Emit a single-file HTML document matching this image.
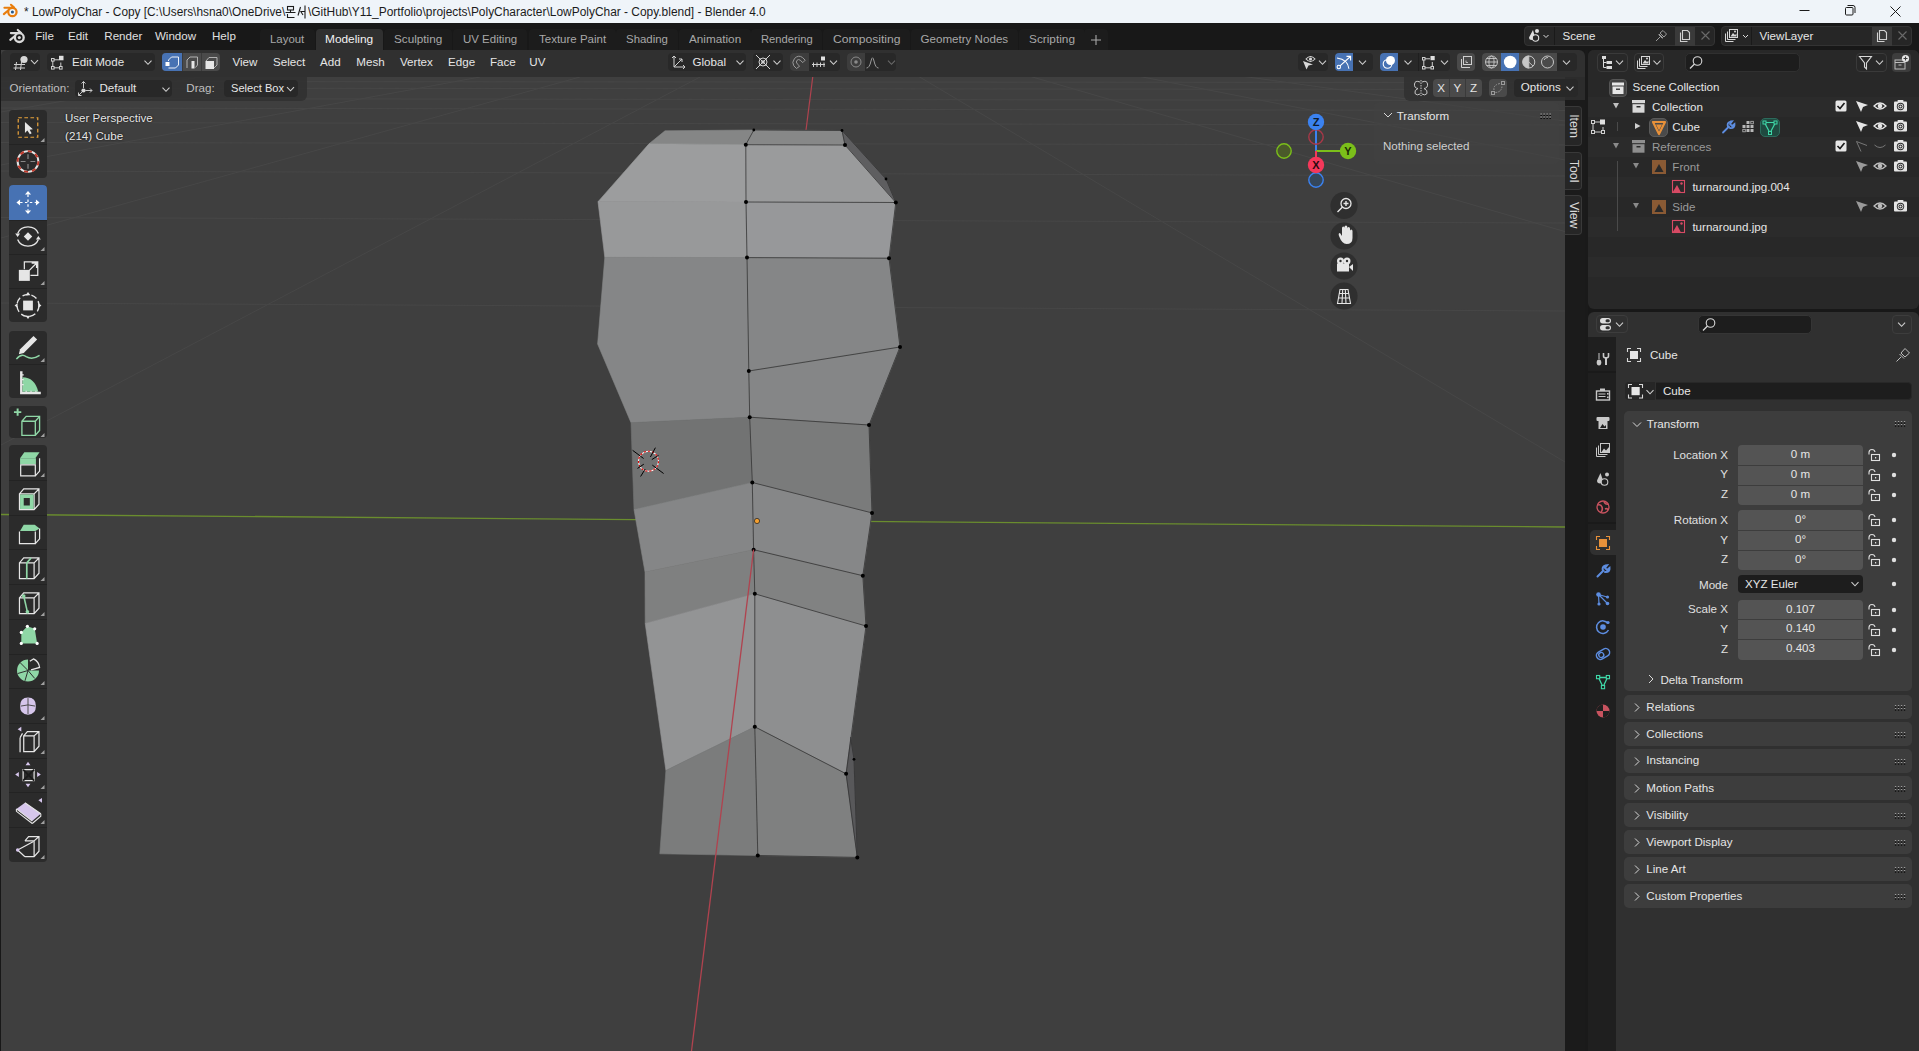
<!DOCTYPE html>
<html><head><meta charset="utf-8">
<style>
*{box-sizing:border-box}
html,body{margin:0;padding:0}
body{width:1919px;height:1051px;overflow:hidden;position:relative;background:#181818;font-family:"Liberation Sans",sans-serif;font-size:12px;color:#e6e6e6}
.a{position:absolute}
.t{position:absolute;white-space:nowrap;line-height:1}
svg{position:absolute;overflow:visible}
</style></head><body>
<div class="a" style="left:0px;top:0px;width:1919px;height:23px;background:#eff4f9;"></div>
<svg style="left:0px;top:0px;" width="24" height="23" viewBox="0 0 24 23"><g transform="translate(12.4,12.0) scale(0.95)"><path d="M-8.4 -4.5 L-0.5 -4.5 M-1.5 -7.6 L1.8 -4.6 M-9 2.2 L-3.2 -2.6" stroke="#e87d0d" stroke-width="2.2" stroke-linecap="round" fill="none"/><circle r="4.4" fill="#eef3f8" stroke="#e87d0d" stroke-width="2.3"/><circle r="1.6" fill="#265787"/></g></svg>
<div class="t" style="left:23.75px;top:6.14px;font-size:12px;color:#1b1b1b;transform:scaleX(0.9867);transform-origin:0 0;">* LowPolyChar - Copy [C:\Users\hsna0\OneDrive\</div>
<svg style="left:285px;top:5px;" width="23" height="14" viewBox="0 0 23 14"><g fill="none" stroke="#1b1b1b" stroke-width="1.1">
<rect x="2.5" y="1.5" width="6" height="3.5"/><path d="M0.5 7.5 H10.5 M5.5 5 V7.5 M2.5 9 V12.5 H9.5"/>
<path d="M15.5 2 L13 10.5 M15.5 6 L18 10 M16 6.5 H19.5 M20 0.5 V13.5"/></g></svg>
<div class="t" style="left:308.00px;top:6.14px;font-size:12px;color:#1b1b1b;transform:scaleX(0.9941);transform-origin:0 0;">\GitHub\Y11_Portfolio\projects\PolyCharacter\LowPolyChar - Copy.blend] - Blender 4.0</div>
<svg style="left:1795px;top:2px;" width="120" height="18" viewBox="0 0 120 18"><g stroke="#1b1b1b" stroke-width="1" fill="none">
<path d="M4.5 8.5 H14.5"/>
<rect x="50.5" y="5.5" width="7.5" height="7.5" rx="1"/><path d="M52.5 3.5 H58 Q60 3.5 60 5.5 V11"/>
<path d="M95.5 4.5 L105.5 14.5 M105.5 4.5 L95.5 14.5"/></g></svg>
<div class="a" style="left:0px;top:23px;width:1919px;height:27px;background:#181818;"></div>
<svg style="left:0px;top:23px;" width="30" height="27" viewBox="0 0 30 27"><g transform="translate(19.3,14.6) scale(1.0)"><path d="M-8.4 -4.5 L-0.5 -4.5 M-1.5 -7.6 L1.8 -4.6 M-9 2.2 L-3.2 -2.6" stroke="#dadada" stroke-width="2.2" stroke-linecap="round" fill="none"/><circle r="4.4" fill="#181818" stroke="#dadada" stroke-width="2.3"/><circle r="1.6" fill="#dadada"/></g></svg>
<div class="t" style="left:35.20px;top:30.48px;font-size:11.6px;color:#e0e0e0;">File</div>
<div class="t" style="left:68.10px;top:30.48px;font-size:11.6px;color:#e0e0e0;">Edit</div>
<div class="t" style="left:104.30px;top:30.48px;font-size:11.6px;color:#e0e0e0;">Render</div>
<div class="t" style="left:154.90px;top:30.48px;font-size:11.6px;color:#e0e0e0;">Window</div>
<div class="t" style="left:212.00px;top:30.48px;font-size:11.6px;color:#e0e0e0;">Help</div>
<div class="a" style="left:260.3px;top:29px;width:54.30000000000001px;height:21px;background:#1c1c1c;border-radius:4px;border-bottom-left-radius:0;border-bottom-right-radius:0;"></div>
<div class="t" style="left:270.30px;top:33.18px;font-size:11.6px;color:#a8a8a8;transform:scaleX(0.9848);transform-origin:0 0;">Layout</div>
<div class="a" style="left:316px;top:29px;width:67px;height:21px;background:#303030;border-radius:4px;border-bottom-left-radius:0;border-bottom-right-radius:0;"></div>
<div class="t" style="left:325.30px;top:33.18px;font-size:11.6px;color:#f2f2f2;transform:scaleX(1.0239);transform-origin:0 0;">Modeling</div>
<div class="a" style="left:384.1px;top:29px;width:68.29999999999995px;height:21px;background:#1c1c1c;border-radius:4px;border-bottom-left-radius:0;border-bottom-right-radius:0;"></div>
<div class="t" style="left:394.10px;top:33.18px;font-size:11.6px;color:#a8a8a8;transform:scaleX(1.0121);transform-origin:0 0;">Sculpting</div>
<div class="a" style="left:453.2px;top:29px;width:74.19999999999999px;height:21px;background:#1c1c1c;border-radius:4px;border-bottom-left-radius:0;border-bottom-right-radius:0;"></div>
<div class="t" style="left:463.20px;top:33.18px;font-size:11.6px;color:#a8a8a8;transform:scaleX(0.9889);transform-origin:0 0;">UV Editing</div>
<div class="a" style="left:528.6px;top:29px;width:87.19999999999993px;height:21px;background:#1c1c1c;border-radius:4px;border-bottom-left-radius:0;border-bottom-right-radius:0;"></div>
<div class="t" style="left:538.60px;top:33.18px;font-size:11.6px;color:#a8a8a8;transform:scaleX(0.9925);transform-origin:0 0;">Texture Paint</div>
<div class="a" style="left:616px;top:29px;width:62px;height:21px;background:#1c1c1c;border-radius:4px;border-bottom-left-radius:0;border-bottom-right-radius:0;"></div>
<div class="t" style="left:626.00px;top:33.18px;font-size:11.6px;color:#a8a8a8;transform:scaleX(0.9866);transform-origin:0 0;">Shading</div>
<div class="a" style="left:678.8px;top:29px;width:72.20000000000005px;height:21px;background:#1c1c1c;border-radius:4px;border-bottom-left-radius:0;border-bottom-right-radius:0;"></div>
<div class="t" style="left:688.80px;top:33.18px;font-size:11.6px;color:#a8a8a8;transform:scaleX(1.0120);transform-origin:0 0;">Animation</div>
<div class="a" style="left:750.8px;top:29px;width:71.70000000000005px;height:21px;background:#1c1c1c;border-radius:4px;border-bottom-left-radius:0;border-bottom-right-radius:0;"></div>
<div class="t" style="left:760.80px;top:33.18px;font-size:11.6px;color:#a8a8a8;transform:scaleX(0.9659);transform-origin:0 0;">Rendering</div>
<div class="a" style="left:822.5px;top:29px;width:87.5px;height:21px;background:#1c1c1c;border-radius:4px;border-bottom-left-radius:0;border-bottom-right-radius:0;"></div>
<div class="t" style="left:832.50px;top:33.18px;font-size:11.6px;color:#a8a8a8;transform:scaleX(1.0469);transform-origin:0 0;">Compositing</div>
<div class="a" style="left:910.5px;top:29px;width:107.5px;height:21px;background:#1c1c1c;border-radius:4px;border-bottom-left-radius:0;border-bottom-right-radius:0;"></div>
<div class="t" style="left:920.50px;top:33.18px;font-size:11.6px;color:#a8a8a8;">Geometry Nodes</div>
<div class="a" style="left:1019px;top:29px;width:66px;height:21px;background:#1c1c1c;border-radius:4px;border-bottom-left-radius:0;border-bottom-right-radius:0;"></div>
<div class="t" style="left:1029.00px;top:33.18px;font-size:11.6px;color:#a8a8a8;transform:scaleX(1.0192);transform-origin:0 0;">Scripting</div>
<div class="a" style="left:1084px;top:29px;width:24px;height:21px;background:#1c1c1c;border-radius:4px;border-bottom-left-radius:0;border-bottom-right-radius:0;"></div>
<svg style="left:1090px;top:34px;" width="12" height="12" viewBox="0 0 12 12"><path d="M6 1 V11 M1 6 H11" stroke="#a8a8a8" stroke-width="1.1"/></svg>
<div class="a" style="left:1524px;top:26px;width:191px;height:20px;background:#262626;border-radius:4px;border:1px solid #333;"></div>
<div class="a" style="left:1674.5px;top:26.5px;width:20px;height:19px;background:#3a3a3a;"></div>
<div class="a" style="left:1554px;top:27px;width:1px;height:18px;background:#1a1a1a;"></div>
<svg style="left:1527px;top:27px;" width="28" height="18" viewBox="0 0 28 18"><path d="M6 3 L2 10.5 Q2 13 5 13 Q8 13 8 10.5 Z" fill="#dedede"/><circle cx="10" cy="4" r="2" fill="#dedede"/>
<circle cx="8.5" cy="11" r="3.2" fill="#282828" stroke="#dedede" stroke-width="1.1"/>
<path d="M16.5 8 L19 10.5 L21.5 8" fill="none" stroke="#dedede" stroke-width="1"/></svg>
<div class="t" style="left:1562.50px;top:30.18px;font-size:11.6px;color:#e6e6e6;">Scene</div>
<svg style="left:1654px;top:29px;" width="14" height="14" viewBox="0 0 14 14"><path d="M2 12 L6 8 M5 5 L9 9 M6 4 L9 1.5 L12.5 5 L10 8 Z M4.5 5.5 L8.5 9.5" fill="none" stroke="#9a9a9a" stroke-width="1"/></svg>
<svg style="left:1677px;top:28px;" width="15" height="16" viewBox="0 0 15 16"><path d="M3.5 4.5 V13.5 H10.5 M5.5 2.5 H10.5 L12.5 4.5 V11.5 H5.5 Z" fill="none" stroke="#d0d0d0" stroke-width="1.1"/></svg>
<svg style="left:1700px;top:30px;" width="11" height="11" viewBox="0 0 11 11"><path d="M1.5 1.5 L9.5 9.5 M9.5 1.5 L1.5 9.5" stroke="#6a6a6a" stroke-width="1.1"/></svg>
<div class="a" style="left:1721px;top:26px;width:191px;height:20px;background:#262626;border-radius:4px;border:1px solid #333;"></div>
<div class="a" style="left:1872px;top:26.5px;width:20px;height:19px;background:#3a3a3a;"></div>
<div class="a" style="left:1751px;top:27px;width:1px;height:18px;background:#1a1a1a;"></div>
<svg style="left:1724px;top:27px;" width="28" height="18" viewBox="0 0 28 18"><g fill="none" stroke="#d6d6d6" stroke-width="1"><rect x="5.5" y="2.5" width="8" height="8"/><path d="M3.5 4.5 V12.5 H11.5 M1.5 6.5 V14.5 H9.5"/></g>
<path d="M6.5 9.5 L9 6 L11 8 L12.5 6.5 V9.5 Z" fill="#d6d6d6"/><circle cx="11" cy="4.5" r="1" fill="#d6d6d6"/>
<path d="M19 8 L21.5 10.5 L24 8" fill="none" stroke="#dedede" stroke-width="1"/></svg>
<div class="t" style="left:1759.50px;top:30.18px;font-size:11.6px;color:#e6e6e6;">ViewLayer</div>
<svg style="left:1874px;top:28px;" width="15" height="16" viewBox="0 0 15 16"><path d="M3.5 4.5 V13.5 H10.5 M5.5 2.5 H10.5 L12.5 4.5 V11.5 H5.5 Z" fill="none" stroke="#d0d0d0" stroke-width="1.1"/></svg>
<svg style="left:1897px;top:30px;" width="11" height="11" viewBox="0 0 11 11"><path d="M1.5 1.5 L9.5 9.5 M9.5 1.5 L1.5 9.5" stroke="#6a6a6a" stroke-width="1.1"/></svg>
<div class="a" style="left:1px;top:50px;width:1564px;height:1001px;background:#3f3f3f;"></div>
<svg style="left:0;top:0" width="1919" height="1051" viewBox="0 0 1919 1051">
<line x1="1" y1="81.5" x2="1565" y2="82.5" stroke="#474747" stroke-width="1"/>
<line x1="1" y1="88" x2="1565" y2="89.5" stroke="#474747" stroke-width="1"/>
<line x1="1" y1="98.5" x2="1565" y2="100.5" stroke="#474747" stroke-width="1"/>
<line x1="1" y1="108" x2="1565" y2="110.5" stroke="#474747" stroke-width="1"/>
<line x1="1" y1="122.5" x2="1565" y2="125" stroke="#474747" stroke-width="1"/>
<line x1="1" y1="142.5" x2="1565" y2="145" stroke="#474747" stroke-width="1"/>
<line x1="1" y1="171" x2="1565" y2="176" stroke="#474747" stroke-width="1"/>
<line x1="1" y1="217.5" x2="1565" y2="223" stroke="#474747" stroke-width="1"/>
<line x1="1" y1="303" x2="1565" y2="311" stroke="#474747" stroke-width="1"/>
<line x1="1" y1="445" x2="700" y2="77" stroke="#474747" stroke-width="1"/>
<line x1="1" y1="238" x2="580" y2="77" stroke="#474747" stroke-width="1"/>
<line x1="1" y1="165" x2="480" y2="77" stroke="#474747" stroke-width="1"/>
<line x1="1" y1="112" x2="200" y2="77" stroke="#474747" stroke-width="1"/>
<line x1="919" y1="76.6" x2="1565" y2="462" stroke="#474747" stroke-width="1"/>
<line x1="1031" y1="76.6" x2="1565" y2="231.6" stroke="#474747" stroke-width="1"/>
<line x1="1140.5" y1="76.6" x2="1565" y2="160" stroke="#474747" stroke-width="1"/>
<line x1="1245" y1="76.6" x2="1565" y2="121" stroke="#474747" stroke-width="1"/>
<line x1="1" y1="514.5" x2="1565" y2="527" stroke="#6a8d2e" stroke-width="1.3"/>
<line x1="806" y1="130" x2="813" y2="75" stroke="#b0434f" stroke-width="1.2"/>
<polygon points="665.0,130.8 753.8,130.0 745.8,144.7 649.0,143.8" fill="#858686" stroke="#858686" stroke-width="0.6"/>
<polygon points="649.0,143.8 745.8,144.7 746.0,202.0 598.0,201.7" fill="#9c9d9e" stroke="#9c9d9e" stroke-width="0.6"/>
<polygon points="598.0,201.7 746.0,202.0 747.0,257.6 604.8,257.3" fill="#98999a" stroke="#98999a" stroke-width="0.6"/>
<polygon points="604.8,257.3 747.0,257.6 748.8,371.0 749.7,417.2 631.0,422.7 597.6,344.0" fill="#858687" stroke="#858687" stroke-width="0.6"/>
<polygon points="631.0,422.7 749.7,417.2 752.3,482.5 634.0,509.6" fill="#727373" stroke="#727373" stroke-width="0.6"/>
<polygon points="634.0,509.6 752.3,482.5 753.6,549.7 645.0,572.0" fill="#858687" stroke="#858687" stroke-width="0.6"/>
<polygon points="645.0,572.0 753.6,549.7 754.8,593.8 645.2,623.5" fill="#7f8080" stroke="#7f8080" stroke-width="0.6"/>
<polygon points="645.2,623.5 754.8,593.8 754.8,726.8 665.9,770.4" fill="#939495" stroke="#939495" stroke-width="0.6"/>
<polygon points="665.9,770.4 754.8,726.8 757.8,855.5 659.8,853.8" fill="#7b7c7c" stroke="#7b7c7c" stroke-width="0.6"/>
<polygon points="753.8,130.0 842.0,130.5 845.0,145.0 745.8,144.7" fill="#878888" stroke="#878888" stroke-width="0.6"/>
<polygon points="842.0,130.5 886.0,179.0 895.8,202.5 845.0,145.0" fill="#5e5e60" stroke="#5e5e60" stroke-width="0.6"/>
<polygon points="745.8,144.7 845.0,145.0 895.8,202.5 746.0,202.0" fill="#9a9b9c" stroke="#9a9b9c" stroke-width="0.6"/>
<polygon points="746.0,202.0 895.8,202.5 889.0,258.2 747.0,257.6" fill="#97989a" stroke="#97989a" stroke-width="0.6"/>
<polygon points="747.0,257.6 889.0,258.2 900.0,347.0 748.8,371.0" fill="#858687" stroke="#858687" stroke-width="0.6"/>
<polygon points="748.8,371.0 900.0,347.0 869.0,425.0 749.7,417.2" fill="#858687" stroke="#858687" stroke-width="0.6"/>
<polygon points="749.7,417.2 869.0,425.0 872.0,512.9 752.3,482.5" fill="#7a7b7b" stroke="#7a7b7b" stroke-width="0.6"/>
<polygon points="752.3,482.5 872.0,512.9 862.8,575.7 753.6,549.7" fill="#868788" stroke="#868788" stroke-width="0.6"/>
<polygon points="753.6,549.7 862.8,575.7 866.0,626.0 754.8,593.8" fill="#818282" stroke="#818282" stroke-width="0.6"/>
<polygon points="754.8,593.8 866.0,626.0 846.1,773.8 754.8,726.8" fill="#8e8f90" stroke="#8e8f90" stroke-width="0.6"/>
<polygon points="754.8,726.8 846.1,773.8 857.3,857.4 757.8,855.5" fill="#7f8080" stroke="#7f8080" stroke-width="0.6"/>
<polygon points="850.7,738.6 854.0,759.3 857.3,857.4 846.1,773.8" fill="#58585a" stroke="#58585a" stroke-width="0.6"/>
<polyline points="753.8,130.0 745.8,144.7 746.0,202.0 747.0,257.6 748.8,371.0 749.7,417.2 752.3,482.5 753.6,549.7 754.8,593.8 754.8,726.8 757.8,855.5" fill="none" stroke="#303030" stroke-width="0.75"/>
<polyline points="753.8,130.0 842.0,130.5" fill="none" stroke="#303030" stroke-width="0.75"/>
<polyline points="745.8,144.7 845.0,145.0" fill="none" stroke="#303030" stroke-width="0.75"/>
<polyline points="746.0,202.0 895.8,202.5" fill="none" stroke="#303030" stroke-width="0.75"/>
<polyline points="747.0,257.6 889.0,258.2" fill="none" stroke="#303030" stroke-width="0.75"/>
<polyline points="748.8,371.0 900.0,347.0" fill="none" stroke="#303030" stroke-width="0.75"/>
<polyline points="749.7,417.2 869.0,425.0" fill="none" stroke="#303030" stroke-width="0.75"/>
<polyline points="752.3,482.5 872.0,512.9" fill="none" stroke="#303030" stroke-width="0.75"/>
<polyline points="753.6,549.7 862.8,575.7" fill="none" stroke="#303030" stroke-width="0.75"/>
<polyline points="754.8,593.8 866.0,626.0" fill="none" stroke="#303030" stroke-width="0.75"/>
<polyline points="754.8,726.8 846.1,773.8" fill="none" stroke="#303030" stroke-width="0.75"/>
<polyline points="757.8,855.5 857.3,857.4" fill="none" stroke="#303030" stroke-width="0.75"/>
<polyline points="842.0,130.5 845.0,145.0 895.8,202.5 889.0,258.2 900.0,347.0 869.0,425.0 872.0,512.9 862.8,575.7 866.0,626.0 846.1,773.8 857.3,857.4" fill="none" stroke="#303030" stroke-width="0.75"/>
<polyline points="842.0,130.5 886.0,179.0 895.8,202.5" fill="none" stroke="#303030" stroke-width="0.75"/>
<polyline points="850.5,737.0 854.0,759.3 857.3,857.4" fill="none" stroke="#303030" stroke-width="0.75"/>
<circle cx="745.8" cy="144.7" r="2.0" fill="#000"/>
<circle cx="746.0" cy="202.0" r="2.0" fill="#000"/>
<circle cx="747.0" cy="257.6" r="2.0" fill="#000"/>
<circle cx="748.8" cy="371.0" r="2.0" fill="#000"/>
<circle cx="749.7" cy="417.2" r="2.0" fill="#000"/>
<circle cx="752.3" cy="482.5" r="2.0" fill="#000"/>
<circle cx="753.6" cy="549.7" r="2.0" fill="#000"/>
<circle cx="754.8" cy="593.8" r="2.0" fill="#000"/>
<circle cx="754.8" cy="726.8" r="2.0" fill="#000"/>
<circle cx="757.8" cy="855.5" r="2.0" fill="#000"/>
<circle cx="845.0" cy="145.0" r="2.0" fill="#000"/>
<circle cx="895.8" cy="202.5" r="2.0" fill="#000"/>
<circle cx="889.0" cy="258.2" r="2.0" fill="#000"/>
<circle cx="900.0" cy="347.0" r="2.0" fill="#000"/>
<circle cx="869.0" cy="425.0" r="2.0" fill="#000"/>
<circle cx="872.0" cy="512.9" r="2.0" fill="#000"/>
<circle cx="862.8" cy="575.7" r="2.0" fill="#000"/>
<circle cx="866.0" cy="626.0" r="2.0" fill="#000"/>
<circle cx="846.1" cy="773.8" r="2.0" fill="#000"/>
<circle cx="857.3" cy="857.4" r="2.0" fill="#000"/>
<circle cx="753.8" cy="130.0" r="1.4" fill="#000"/>
<circle cx="842.0" cy="130.5" r="1.4" fill="#000"/>
<circle cx="886.0" cy="179.0" r="1.4" fill="#000"/>
<circle cx="854.0" cy="759.3" r="1.4" fill="#000"/>
<line x1="691.5" y1="1051" x2="753.6" y2="549.7" stroke="#b0434f" stroke-width="1.3"/>
<circle cx="757" cy="521" r="2.6" fill="#f5a030" stroke="#1a1a1a" stroke-width="0.7"/>
<g transform="translate(648.5,461.2)"><circle r="10" fill="none" stroke="#fff" stroke-width="1.1"/><circle r="10" fill="none" stroke="#e00000" stroke-width="1.1" stroke-dasharray="2.1 2.1"/><path d="M-15.9 -10.9 L-4.9 -2.7 M3.8 3.9 L15.1 12.3 M6.9 -13.5 L1.9 -4.2 M10 -5.8 L3.3 -1.6 M-7.9 15.3 L-3.3 7.8 M-11 7.2 L-4.7 3" stroke="#000" stroke-width="1"/></g>
</svg>
<div class="a" style="left:1px;top:50px;width:1584px;height:26.5px;background:#303030;border-radius:6px;border-bottom-left-radius:0;border-bottom-right-radius:0;"></div>
<div class="a" style="left:1px;top:76.5px;width:306px;height:24px;background:rgba(48,48,48,0.85);border-bottom-right-radius:6px;"></div>
<div class="a" style="left:1404px;top:76.5px;width:181px;height:24px;background:rgba(48,48,48,0.85);border-bottom-left-radius:6px;"></div>
<div class="a" style="left:10px;top:53px;width:30px;height:18px;background:#282828;border-radius:4px;"></div>
<svg style="left:10px;top:53px;" width="30" height="18" viewBox="0 0 30 18"><g stroke="#cfcfcf" stroke-width="1" fill="none"><path d="M4 11.5 H15 M3.5 15 H15 M6.5 9 L5.5 17 M11.5 9 L10.5 17"/></g>
<circle cx="14" cy="6.5" r="3.6" fill="#d8d8d8"/><path d="M21.0 7.2 L24.5 10.8 L28.0 7.2" fill="none" stroke="#cfcfcf" stroke-width="1.1"/></svg>
<div class="a" style="left:47px;top:53px;width:108px;height:18px;background:#282828;border-radius:4px;"></div>
<svg style="left:47px;top:53px;" width="108" height="18" viewBox="0 0 108 18"><g stroke="#cfcfcf" stroke-width="1" fill="none"><rect x="4.5" y="5.5" width="2.6" height="2.6"/><rect x="4.5" y="13.5" width="2.6" height="2.6"/><rect x="12.5" y="13.5" width="2.6" height="2.6"/><path d="M7 6.8 H12 M5.8 8 V13.5 M7 14.8 H12.5 M13.8 9.5 V13.5"/></g>
<rect x="12" y="2.8" width="4.5" height="4.5" fill="#e0e0e0"/><path d="M97.5 7.7 L101 11.3 L104.5 7.7" fill="none" stroke="#cfcfcf" stroke-width="1.1"/></svg>
<div class="t" style="left:72.00px;top:56.48px;font-size:11.6px;color:#e6e6e6;">Edit Mode</div>
<div class="a" style="left:162px;top:53px;width:58px;height:18px;background:#4a4a4a;border-radius:4px;"></div>
<div class="a" style="left:162px;top:53px;width:19.5px;height:18px;background:#4772b3;border-radius:4px;border-top-right-radius:0;border-bottom-right-radius:0;"></div>
<div class="a" style="left:181.5px;top:53px;width:1px;height:18px;background:#3a3a3a;"></div>
<div class="a" style="left:201px;top:53px;width:1px;height:18px;background:#3a3a3a;"></div>
<svg style="left:162px;top:53px;" width="58" height="18" viewBox="0 0 58 18"><g fill="none" stroke="#ffffff" stroke-width="0.9">
<path d="M6.5 15 H13.5 L16.5 12 V4 H9.5 L6.5 7 V8"/></g><rect x="3.5" y="9" width="4" height="4" fill="#fff"/>
<g fill="none" stroke="#bdbdbd" stroke-width="0.9"><path d="M25 15 V7 L28 4 H35.5 V12 L33.5 14.5"/></g><rect x="29.5" y="8" width="3" height="7.5" fill="#e6e6e6"/>
<g fill="none" stroke="#bdbdbd" stroke-width="0.9"><path d="M44 8 L47 4.5 H55 V12 L52 15"/></g><rect x="43.5" y="8" width="8.5" height="8" fill="#e6e6e6"/></svg>
<div class="t" style="left:232.50px;top:56.48px;font-size:11.6px;color:#e6e6e6;">View</div>
<div class="t" style="left:273.00px;top:56.48px;font-size:11.6px;color:#e6e6e6;">Select</div>
<div class="t" style="left:320.00px;top:56.48px;font-size:11.6px;color:#e6e6e6;">Add</div>
<div class="t" style="left:356.30px;top:56.48px;font-size:11.6px;color:#e6e6e6;">Mesh</div>
<div class="t" style="left:400.00px;top:56.48px;font-size:11.6px;color:#e6e6e6;">Vertex</div>
<div class="t" style="left:448.00px;top:56.48px;font-size:11.6px;color:#e6e6e6;">Edge</div>
<div class="t" style="left:490.00px;top:56.48px;font-size:11.6px;color:#e6e6e6;">Face</div>
<div class="t" style="left:529.30px;top:56.48px;font-size:11.6px;color:#e6e6e6;">UV</div>
<div class="a" style="left:668px;top:53px;width:77.5px;height:18px;background:#282828;border-radius:4px;"></div>
<svg style="left:668px;top:53px;" width="78" height="18" viewBox="0 0 78 18"><g stroke="#d0d0d0" stroke-width="1" fill="none"><path d="M6 3 V14 H17 M4 5 L6 3 L8 5 M15 12 L17 14 L15 16 M6 14 L14 6 M11 6 H14 V9"/></g><path d="M68.5 7.7 L72 11.3 L75.5 7.7" fill="none" stroke="#cfcfcf" stroke-width="1.1"/></svg>
<div class="t" style="left:692.50px;top:56.48px;font-size:11.6px;color:#e6e6e6;">Global</div>
<div class="a" style="left:753px;top:53px;width:30px;height:18px;background:#282828;border-radius:4px;"></div>
<svg style="left:753px;top:53px;" width="30" height="18" viewBox="0 0 30 18"><g stroke="#d0d0d0" stroke-width="1" fill="none"><circle cx="10" cy="9" r="4"/><path d="M3 2 L17 16 M17 2 L3 16"/></g><circle cx="10" cy="9" r="1.8" fill="#d0d0d0"/><path d="M20.5 7.7 L24 11.3 L27.5 7.7" fill="none" stroke="#cfcfcf" stroke-width="1.1"/></svg>
<div class="a" style="left:790px;top:53px;width:50px;height:18px;background:#282828;border-radius:4px;"></div>
<div class="a" style="left:790px;top:53px;width:19px;height:18px;background:#3d3d3d;border-radius:4px;border-top-right-radius:0;border-bottom-right-radius:0;"></div>
<svg style="left:790px;top:53px;" width="50" height="18" viewBox="0 0 50 18"><path d="M6.5 15.5 L3.8 12.8 Q1.5 9.5 4.5 5.5 Q8.5 1.5 12.5 4.5 L15.2 7.2 L12.8 9.6 L10.2 7.2 Q8.5 5.8 7 7.3 Q5.6 9 7.2 10.8 L9.6 13.2 Z" fill="none" stroke="#9a9a9a" stroke-width="1"/>
<g stroke="#d0d0d0" stroke-width="1" fill="none"><path d="M22 11.5 H35 M23.5 9.5 V14 M27 9.5 V14 M30.5 9.5 V14 M34 9.5 V14"/></g><rect x="31" y="3.5" width="4" height="4" fill="#e0e0e0"/><path d="M40.0 7.7 L43.5 11.3 L47.0 7.7" fill="none" stroke="#cfcfcf" stroke-width="1.1"/></svg>
<div class="a" style="left:847px;top:53px;width:49px;height:18px;background:#282828;border-radius:4px;"></div>
<div class="a" style="left:847px;top:53px;width:18px;height:18px;background:#3d3d3d;border-radius:4px;border-top-right-radius:0;border-bottom-right-radius:0;"></div>
<svg style="left:847px;top:53px;" width="50" height="18" viewBox="0 0 50 18"><circle cx="9" cy="9" r="5" fill="none" stroke="#8a8a8a" stroke-width="1"/><circle cx="9" cy="9" r="1.8" fill="#8a8a8a"/>
<path d="M19.5 15 Q22.5 15 24 8 Q25.5 1.5 27 8 Q28.5 15 31.5 15" fill="none" stroke="#9a9a9a" stroke-width="1"/><path d="M41.0 7.7 L44.5 11.3 L48.0 7.7" fill="none" stroke="#6a6a6a" stroke-width="1.1"/></svg>
<div class="a" style="left:1298px;top:53px;width:30px;height:18px;background:#282828;border-radius:4px;"></div>
<svg style="left:1298px;top:53px;" width="30" height="18" viewBox="0 0 30 18"><path d="M5 8 L15 11.5 L10.5 12.5 L8.5 16.5 Z" fill="#d8d8d8"/>
<path d="M8 6 Q12.5 1 17 6 Q12.5 11 8 6 Z" fill="none" stroke="#d8d8d8" stroke-width="1.1"/><circle cx="12.5" cy="6" r="1.6" fill="#d8d8d8"/><path d="M21.0 7.7 L24.5 11.3 L28.0 7.7" fill="none" stroke="#cfcfcf" stroke-width="1.1"/></svg>
<div class="a" style="left:1335px;top:53px;width:38px;height:18px;background:#282828;border-radius:4px;"></div>
<div class="a" style="left:1335px;top:53px;width:18px;height:18px;background:#4772b3;border-radius:4px;border-top-right-radius:0;border-bottom-right-radius:0;"></div>
<svg style="left:1335px;top:53px;" width="38" height="18" viewBox="0 0 38 18"><g fill="none" stroke="#ffffff" stroke-width="1.1"><circle cx="3.8" cy="14" r="1.7"/><path d="M5 12.8 L15.5 3.5 M11.5 3.4 H15.6 V7.5 M2 5 Q13 6.5 13.9 15.8"/></g><path d="M24.0 7.7 L27.5 11.3 L31.0 7.7" fill="none" stroke="#cfcfcf" stroke-width="1.1"/></svg>
<div class="a" style="left:1380px;top:53px;width:69.7px;height:18px;background:#282828;border-radius:4px;"></div>
<div class="a" style="left:1380px;top:53px;width:18px;height:18px;background:#4772b3;border-radius:4px;border-top-right-radius:0;border-bottom-right-radius:0;"></div>
<div class="a" style="left:1417.5px;top:53px;width:1px;height:18px;background:#1f1f1f;"></div>
<svg style="left:1380px;top:53px;" width="70" height="18" viewBox="0 0 70 18"><circle cx="10.5" cy="7.5" r="4.5" fill="#fff"/><circle cx="7.5" cy="11" r="4.3" fill="none" stroke="#fff" stroke-width="1.1"/><path d="M24.5 7.7 L28 11.3 L31.5 7.7" fill="none" stroke="#cfcfcf" stroke-width="1.1"/>
<g fill="none" stroke="#d0d0d0" stroke-width="1"><rect x="42.5" y="4.5" width="2.5" height="2.5"/><rect x="42.5" y="13.5" width="2.5" height="2.5"/><rect x="51" y="13.5" width="2.5" height="2.5"/><path d="M45 5.8 H50 M43.8 7 V13.5 M45 14.8 H51 M52.3 9 V13.5"/></g>
<rect x="50.5" y="3" width="4.2" height="4.2" fill="#e0e0e0"/><path d="M61.0 7.7 L64.5 11.3 L68.0 7.7" fill="none" stroke="#cfcfcf" stroke-width="1.1"/></svg>
<div class="a" style="left:1456.7px;top:53px;width:18px;height:18px;background:#4a4a4a;border-radius:4px;"></div>
<svg style="left:1456.7px;top:53px;" width="18" height="18" viewBox="0 0 18 18"><g fill="none" stroke="#d0d0d0" stroke-width="1"><path d="M4.5 6 V14.5 H13"/><rect x="6.5" y="3.5" width="8" height="8"/></g><path d="M9 7.5 V9.5 H11" stroke="#d0d0d0" stroke-width="0.8" fill="none"/></svg>
<div class="a" style="left:1481.7px;top:53px;width:95px;height:18px;background:#282828;border-radius:4px;"></div>
<div class="a" style="left:1481.7px;top:53px;width:75px;height:18px;background:#4a4a4a;border-radius:4px;border-top-right-radius:0;border-bottom-right-radius:0;"></div>
<div class="a" style="left:1500.8px;top:53px;width:18px;height:18px;background:#4772b3;"></div>
<svg style="left:1481.7px;top:53px;" width="96" height="18" viewBox="0 0 96 18"><g fill="none" stroke="#c8c8c8" stroke-width="0.9"><circle cx="9.5" cy="9" r="6"/><ellipse cx="9.5" cy="9" rx="2.6" ry="6"/><path d="M3.5 9 H15.5 M4.5 5.5 H14.5 M4.5 12.5 H14.5"/></g>
<circle cx="28.2" cy="9" r="6.3" fill="#fff"/>
<circle cx="46.8" cy="9" r="6" fill="none" stroke="#c8c8c8" stroke-width="1"/><path d="M46.8 3 A6 6 0 0 0 46.8 15 Z M46.8 9 L51 13" fill="#c8c8c8" stroke="#c8c8c8" stroke-width="0.9"/>
<circle cx="65.5" cy="9" r="6" fill="none" stroke="#c8c8c8" stroke-width="1"/><path d="M62 7 A4 4 0 0 1 66 4.5" fill="none" stroke="#c8c8c8" stroke-width="1"/><path d="M81.0 7.7 L84.5 11.3 L88.0 7.7" fill="none" stroke="#cfcfcf" stroke-width="1.1"/></svg>
<div class="t" style="left:9.50px;top:81.68px;font-size:11.6px;color:#bfbfbf;">Orientation:</div>
<div class="a" style="left:74.5px;top:79.5px;width:97px;height:17px;background:#282828;border-radius:4px;"></div>
<svg style="left:74.5px;top:79.5px;" width="97" height="17" viewBox="0 0 97 17"><g stroke="#c8c8c8" stroke-width="1" fill="none"><path d="M8.5 8 V1.5 M6.5 3.5 L8.5 1.5 L10.5 3.5 M10.5 10.5 H17 M15 8.5 L17 10.5 L15 12.5 M7 12 L3.5 15.5 M3.5 12.5 V15.5 H6.5"/></g><circle cx="8.5" cy="10.5" r="2.1" fill="#d8d8d8"/><path d="M87.5 7.7 L91 11.3 L94.5 7.7" fill="none" stroke="#cfcfcf" stroke-width="1.1"/></svg>
<div class="t" style="left:99.50px;top:81.68px;font-size:11.6px;color:#e6e6e6;">Default</div>
<div class="t" style="left:186.30px;top:81.68px;font-size:11.6px;color:#bfbfbf;">Drag:</div>
<div class="a" style="left:224px;top:79.5px;width:73.5px;height:17px;background:#282828;border-radius:4px;"></div>
<div class="t" style="left:231.30px;top:81.68px;font-size:11.6px;color:#e6e6e6;transform:scaleX(0.9558);transform-origin:0 0;">Select Box</div>
<svg style="left:224px;top:79.5px;" width="74" height="17" viewBox="0 0 74 17"><path d="M63.0 7.2 L66.5 10.8 L70.0 7.2" fill="none" stroke="#cfcfcf" stroke-width="1.1"/></svg>
<svg style="left:1412px;top:79px;" width="18" height="18" viewBox="0 0 18 18"><g fill="none" stroke="#c8c8c8" stroke-width="1"><path d="M8 3 Q3 1 2.5 5 Q2 9 6 9.5 Q2 11 3 14.5 Q5 17 8 15"/><path d="M10 3 Q15 1 15.5 5 Q16 9 12 9.5 Q16 11 15 14.5 Q13 17 10 15"/><path d="M9 1 V17" stroke-dasharray="1.5 1"/></g></svg>
<div class="a" style="left:1433px;top:79px;width:48.7px;height:18px;background:#4a4a4a;border-radius:4px;"></div>
<div class="a" style="left:1449px;top:79px;width:1px;height:18px;background:#3a3a3a;"></div>
<div class="a" style="left:1465px;top:79px;width:1px;height:18px;background:#3a3a3a;"></div>
<div class="t" style="left:1437.13px;top:81.68px;font-size:11.6px;color:#e6e6e6;">X</div>
<div class="t" style="left:1453.43px;top:81.68px;font-size:11.6px;color:#e6e6e6;">Y</div>
<div class="t" style="left:1469.96px;top:81.68px;font-size:11.6px;color:#e6e6e6;">Z</div>
<div class="a" style="left:1489px;top:79px;width:17.7px;height:18px;background:#4a4a4a;border-radius:4px;"></div>
<svg style="left:1489px;top:79px;" width="18" height="18" viewBox="0 0 18 18"><g fill="none" stroke="#9a9a9a" stroke-width="1"><rect x="2.5" y="12.5" width="3" height="3"/><rect x="12.5" y="2.5" width="3" height="3"/><path d="M5 11 Q4 6 11 4.5" stroke-dasharray="1.5 1.2"/><path d="M6.5 13.5 Q13 13 13 6.5" stroke-dasharray="1.5 1.2"/></g></svg>
<div class="a" style="left:1514px;top:79px;width:63.5px;height:18px;background:#282828;border-radius:4px;"></div>
<div class="t" style="left:1520.80px;top:80.98px;font-size:11.6px;color:#e6e6e6;">Options</div>
<svg style="left:1514px;top:79px;" width="64" height="18" viewBox="0 0 64 18"><path d="M52.5 7.7 L56 11.3 L59.5 7.7" fill="none" stroke="#cfcfcf" stroke-width="1.1"/></svg>
<div class="a" style="left:1565px;top:100px;width:20px;height:951px;background:#1b1b1b;"></div>
<div class="a" style="left:1585px;top:50px;width:3px;height:1001px;background:#1a1a1a;"></div>
<div class="a" style="left:1565px;top:106px;width:17px;height:40px;background:#262626;border-radius:0 4px 4px 0;border:1px solid #393939;border-left:none;"></div>
<div class="t" style="left:1561.8px;top:119.8px;font-size:12.3px;color:#d8d8d8;transform:rotate(90deg);transform-origin:12.0px 6.15px;">Item</div>
<div class="a" style="left:1565px;top:151.6px;width:17px;height:38.80000000000001px;background:#262626;border-radius:0 4px 4px 0;border:1px solid #393939;border-left:none;"></div>
<div class="t" style="left:1562.5px;top:164.8px;font-size:12.3px;color:#d8d8d8;transform:rotate(90deg);transform-origin:11.3px 6.15px;">Tool</div>
<div class="a" style="left:1565px;top:195px;width:17px;height:40px;background:#262626;border-radius:0 4px 4px 0;border:1px solid #393939;border-left:none;"></div>
<div class="t" style="left:1560.6px;top:208.8px;font-size:12.3px;color:#d8d8d8;transform:rotate(90deg);transform-origin:13.2px 6.15px;">View</div>
<div class="a" style="left:1374px;top:102px;width:185px;height:62px;background:rgba(66,66,66,0.55);border-radius:5px;"></div>
<svg style="left:1374px;top:102px;" width="185" height="62" viewBox="0 0 185 62"><path d="M10 11 L14 15 L18 11" fill="none" stroke="#d8d8d8" stroke-width="1"/><rect x="166.5" y="11.5" width="1.3" height="1.2" fill="#a8a8a8"/><rect x="166.5" y="12.8" width="1.3" height="1.2" fill="#000"/><rect x="166.5" y="14.5" width="1.3" height="1.2" fill="#a8a8a8"/><rect x="166.5" y="15.8" width="1.3" height="1.2" fill="#000"/><rect x="169.5" y="11.5" width="1.3" height="1.2" fill="#a8a8a8"/><rect x="169.5" y="12.8" width="1.3" height="1.2" fill="#000"/><rect x="169.5" y="14.5" width="1.3" height="1.2" fill="#a8a8a8"/><rect x="169.5" y="15.8" width="1.3" height="1.2" fill="#000"/><rect x="172.5" y="11.5" width="1.3" height="1.2" fill="#a8a8a8"/><rect x="172.5" y="12.8" width="1.3" height="1.2" fill="#000"/><rect x="172.5" y="14.5" width="1.3" height="1.2" fill="#a8a8a8"/><rect x="172.5" y="15.8" width="1.3" height="1.2" fill="#000"/><rect x="175.5" y="11.5" width="1.3" height="1.2" fill="#a8a8a8"/><rect x="175.5" y="12.8" width="1.3" height="1.2" fill="#000"/><rect x="175.5" y="14.5" width="1.3" height="1.2" fill="#a8a8a8"/><rect x="175.5" y="15.8" width="1.3" height="1.2" fill="#000"/></svg>
<div class="t" style="left:1396.70px;top:110.18px;font-size:11.6px;color:#e6e6e6;">Transform</div>
<div class="t" style="left:1383.00px;top:139.88px;font-size:11.6px;color:#cfcfcf;">Nothing selected</div>
<div class="a" style="left:9px;top:110.4px;width:38px;height:67.4px;background:#2b2b2b;border-radius:4px;"></div>
<div class="a" style="left:9px;top:144.10000000000002px;width:38px;height:1px;background:#232323;"></div>
<div class="a" style="left:9px;top:185.3px;width:38px;height:137.0px;background:#2b2b2b;border-radius:4px;"></div>
<div class="a" style="left:9px;top:219.55px;width:38px;height:1px;background:#232323;"></div>
<div class="a" style="left:9px;top:253.8px;width:38px;height:1px;background:#232323;"></div>
<div class="a" style="left:9px;top:288.05px;width:38px;height:1px;background:#232323;"></div>
<div class="a" style="left:9px;top:330.5px;width:38px;height:67.5px;background:#2b2b2b;border-radius:4px;"></div>
<div class="a" style="left:9px;top:364.25px;width:38px;height:1px;background:#232323;"></div>
<div class="a" style="left:9px;top:405.6px;width:38px;height:32.5px;background:#2b2b2b;border-radius:4px;"></div>
<div class="a" style="left:9px;top:445.3px;width:38px;height:416.40000000000003px;background:#2b2b2b;border-radius:4px;"></div>
<div class="a" style="left:9px;top:480.0px;width:38px;height:1px;background:#232323;"></div>
<div class="a" style="left:9px;top:514.7px;width:38px;height:1px;background:#232323;"></div>
<div class="a" style="left:9px;top:549.4px;width:38px;height:1px;background:#232323;"></div>
<div class="a" style="left:9px;top:584.1px;width:38px;height:1px;background:#232323;"></div>
<div class="a" style="left:9px;top:618.8px;width:38px;height:1px;background:#232323;"></div>
<div class="a" style="left:9px;top:653.5px;width:38px;height:1px;background:#232323;"></div>
<div class="a" style="left:9px;top:688.2px;width:38px;height:1px;background:#232323;"></div>
<div class="a" style="left:9px;top:722.9000000000001px;width:38px;height:1px;background:#232323;"></div>
<div class="a" style="left:9px;top:757.6px;width:38px;height:1px;background:#232323;"></div>
<div class="a" style="left:9px;top:792.3px;width:38px;height:1px;background:#232323;"></div>
<div class="a" style="left:9px;top:827.0px;width:38px;height:1px;background:#232323;"></div>
<div class="a" style="left:9px;top:185.3px;width:38px;height:34.25px;background:#4772b3;border-radius:4px 4px 0 0;"></div>
<svg style="left:9px;top:109.9px;" width="38" height="35" viewBox="0 0 38 35"><g transform="translate(3.5,2)"><g transform="translate(15.5 15.5) scale(1.22) translate(-15.5 -15.5)"><rect x="7.5" y="7.5" width="16" height="16" fill="none" stroke="#e8a23b" stroke-width="1" stroke-dasharray="3 2"/><path d="M13 11 V20 L15 18 L17 21 L18.5 20.2 L16.8 17.3 L19.5 17 Z" fill="#e6e6e6"/></g><path d="M32 30 L32 26 L28 30 Z" fill="#a0a0a0"/></g></svg>
<svg style="left:9px;top:143.6px;" width="38" height="35" viewBox="0 0 38 35"><g transform="translate(3.5,2)"><g transform="translate(15.5 15.5) scale(1.22) translate(-15.5 -15.5)"><circle cx="15.5" cy="15.5" r="8.5" fill="none" stroke="#e6e6e6" stroke-width="1.6"/><circle cx="15.5" cy="15.5" r="8.5" fill="none" stroke="#c0392b" stroke-width="1.6" stroke-dasharray="3.3 3.3"/><path d="M15.5 9.5 V13.5 M15.5 17.5 V21.5 M9.5 15.5 H13.5 M17.5 15.5 H21.5" stroke="#888" stroke-width="1"/></g></g></svg>
<svg style="left:9px;top:184.8px;" width="38" height="35" viewBox="0 0 38 35"><g transform="translate(3.5,2)"><g transform="translate(15.5 15.5) scale(1.22) translate(-15.5 -15.5)"><g fill="#fff"><path d="M15.5 6 L13 9 H18 Z M15.5 25 L13 22 H18 Z M6 15.5 L9 13 V18 Z M25 15.5 L22 13 V18 Z"/></g><path d="M15.5 9 V22 M9 15.5 H22" stroke="#fff" stroke-width="1" stroke-dasharray="2 2"/></g></g></svg>
<svg style="left:9px;top:219.1px;" width="38" height="35" viewBox="0 0 38 35"><g transform="translate(3.5,2)"><g transform="translate(15.5 15.5) scale(1.22) translate(-15.5 -15.5)"><path d="M7 13 A9 8 0 0 1 24 13 M24 18 A9 8 0 0 1 7 18" fill="none" stroke="#e6e6e6" stroke-width="1.1"/><path d="M15.5 12 L19 15.5 L15.5 19 L12 15.5 Z" fill="#e6e6e6"/><path d="M5 13 L9 13 L7 16 Z M26 18 L22 18 L24 15 Z" fill="#e6e6e6"/></g><path d="M32 30 L32 26 L28 30 Z" fill="#a0a0a0"/></g></svg>
<svg style="left:9px;top:253.3px;" width="38" height="35" viewBox="0 0 38 35"><g transform="translate(3.5,2)"><g transform="translate(15.5 15.5) scale(1.22) translate(-15.5 -15.5)"><rect x="8" y="15" width="9" height="9" fill="#e6e6e6"/><path d="M12.5 14.5 V8.5 H23.5 V19.5 H17.5 M15 17 L22 10 M18.5 9.5 H22.5 V13.5" fill="none" stroke="#e6e6e6" stroke-width="1"/></g><path d="M32 30 L32 26 L28 30 Z" fill="#a0a0a0"/></g></svg>
<svg style="left:9px;top:287.6px;" width="38" height="35" viewBox="0 0 38 35"><g transform="translate(3.5,2)"><g transform="translate(15.5 15.5) scale(1.22) translate(-15.5 -15.5)"><circle cx="15.5" cy="15.5" r="9" fill="none" stroke="#e6e6e6" stroke-width="1.1" stroke-dasharray="5 2.5"/><rect x="11.5" y="11.5" width="8" height="8" fill="#e6e6e6"/><path d="M15.5 4.5 L13.5 7 H17.5 Z M15.5 26.5 L13.5 24 H17.5 Z M4.5 15.5 L7 13.5 V17.5 Z M26.5 15.5 L24 13.5 V17.5 Z" fill="#e6e6e6"/></g></g></svg>
<svg style="left:9px;top:330.0px;" width="38" height="35" viewBox="0 0 38 35"><g transform="translate(3.5,2)"><g transform="translate(15.5 15.5) scale(1.22) translate(-15.5 -15.5)"><path d="M8 21 L9 17 L20 6 L23 9 L12 20 Z" fill="#e6e6e6"/><path d="M6 25 Q10 20 14 23 Q19 26 25 22" fill="none" stroke="#8fd7a6" stroke-width="1.2"/></g><path d="M32 30 L32 26 L28 30 Z" fill="#a0a0a0"/></g></svg>
<svg style="left:9px;top:363.8px;" width="38" height="35" viewBox="0 0 38 35"><g transform="translate(3.5,2)"><g transform="translate(15.5 15.5) scale(1.22) translate(-15.5 -15.5)"><path d="M10 7 V25 H26" fill="none" stroke="#e6e6e6" stroke-width="2"/><path d="M11 12 Q21 12 24 24 H11 Z" fill="#8fd7a6"/><path d="M10 10 H12 M10 14 H12 M10 18 H12 M14 25 V23 M18 25 V23 M22 25 V23" stroke="#e6e6e6" stroke-width="1"/></g></g></svg>
<svg style="left:9px;top:405.1px;" width="38" height="35" viewBox="0 0 38 35"><g transform="translate(3.5,2)"><g transform="translate(15.5 15.5) scale(1.22) translate(-15.5 -15.5)"><path d="M7 4 V10 M4 7 H10" stroke="#8fd7a6" stroke-width="1.6"/><g fill="none" stroke="#8fd7a6" stroke-width="1.1"><path d="M10.5 14.5 L14 10.5 H25 V22 L21.5 26 H10.5 Z M10.5 14.5 H21.5 V26 M21.5 14.5 L25 10.5"/></g></g><path d="M32 30 L32 26 L28 30 Z" fill="#a0a0a0"/></g></svg>
<svg style="left:9px;top:444.8px;" width="38" height="35" viewBox="0 0 38 35"><g transform="translate(3.5,2)"><g transform="translate(15.5 15.5) scale(1.22) translate(-15.5 -15.5)"><path d="M9 12 L12.5 7 H25 L21.5 12 Z" fill="#8fd7a6"/><rect x="9" y="12" width="13" height="5" fill="#8fd7a6"/><g fill="none" stroke="#e6e6e6" stroke-width="1"><path d="M9.5 17.5 V26.5 H21.5 V17.5 Z M21.5 26.5 L25 22.5 V12"/></g></g><path d="M32 30 L32 26 L28 30 Z" fill="#a0a0a0"/></g></svg>
<svg style="left:9px;top:479.5px;" width="38" height="35" viewBox="0 0 38 35"><g transform="translate(3.5,2)"><g transform="translate(15.5 15.5) scale(1.22) translate(-15.5 -15.5)"><g fill="none" stroke="#e6e6e6" stroke-width="1"><path d="M8.5 12.5 L12 8.5 H24.5 V21 L20.5 25.5 H8.5 Z M8.5 12.5 H20.5 V25.5 M20.5 12.5 L24.5 8.5"/></g><path d="M9 13 H20 V25 H9 Z M12 16 V22 H17 V16 Z" fill="#8fd7a6" fill-rule="evenodd"/></g></g></svg>
<svg style="left:9px;top:514.2px;" width="38" height="35" viewBox="0 0 38 35"><g transform="translate(3.5,2)"><g transform="translate(15.5 15.5) scale(1.22) translate(-15.5 -15.5)"><g fill="none" stroke="#e6e6e6" stroke-width="1"><path d="M8.5 15.5 V25.5 H21.5 V15.5 M21.5 25.5 L25 21.5 V13"/></g><path d="M9 15 L12 10 H21 L25 13 L21.5 15 Z" fill="#8fd7a6"/></g></g></svg>
<svg style="left:9px;top:548.9px;" width="38" height="35" viewBox="0 0 38 35"><g transform="translate(3.5,2)"><g transform="translate(15.5 15.5) scale(1.22) translate(-15.5 -15.5)"><g fill="none" stroke="#e6e6e6" stroke-width="1"><path d="M8.5 12.5 L12 8.5 H24.5 V21 L20.5 25.5 H8.5 Z M8.5 12.5 H20.5 V25.5 M20.5 12.5 L24.5 8.5"/></g><path d="M14.5 12.5 L18 8.5 M14.5 12.5 V25.5" stroke="#8fd7a6" stroke-width="1.4"/></g><path d="M32 30 L32 26 L28 30 Z" fill="#a0a0a0"/></g></svg>
<svg style="left:9px;top:583.6px;" width="38" height="35" viewBox="0 0 38 35"><g transform="translate(3.5,2)"><g transform="translate(15.5 15.5) scale(1.22) translate(-15.5 -15.5)"><g fill="none" stroke="#e6e6e6" stroke-width="1"><path d="M8.5 12.5 L12 8.5 H24.5 V21 L20.5 25.5 H8.5 Z M8.5 12.5 H20.5 V25.5 M20.5 12.5 L24.5 8.5"/></g><path d="M12 11 L15 24" stroke="#8fd7a6" stroke-width="1.3"/><circle cx="12" cy="11" r="1.5" fill="#8fd7a6"/><circle cx="15" cy="24" r="1.5" fill="#8fd7a6"/></g><path d="M32 30 L32 26 L28 30 Z" fill="#a0a0a0"/></g></svg>
<svg style="left:9px;top:618.3px;" width="38" height="35" viewBox="0 0 38 35"><g transform="translate(3.5,2)"><g transform="translate(15.5 15.5) scale(1.22) translate(-15.5 -15.5)"><path d="M10 13 L15 8 L21 10 L23 22 H10 Z" fill="#8fd7a6"/><g fill="#fff"><circle cx="10" cy="13" r="1.3"/><circle cx="15" cy="8" r="1.3"/><circle cx="21" cy="10" r="1.3"/><circle cx="23" cy="22" r="1.3"/><circle cx="10" cy="22" r="1.3"/></g></g></g></svg>
<svg style="left:9px;top:653.0px;" width="38" height="35" viewBox="0 0 38 35"><g transform="translate(3.5,2)"><g transform="translate(15.5 15.5) scale(1.22) translate(-15.5 -15.5)"><path d="M15.5 15.5 L15.5 6.5 A9 9 0 1 0 24.5 15.5 Z" fill="#8fd7a6"/><path d="M15.5 15.5 L9 9 M15.5 15.5 L7 18 M15.5 15.5 L13 24 M15.5 15.5 L21 22" stroke="#2b2b2b" stroke-width="0.8"/><path d="M17 8 L20 6 A9 9 0 0 1 25 13 L18 15" fill="none" stroke="#e6e6e6" stroke-width="1"/></g><path d="M32 30 L32 26 L28 30 Z" fill="#a0a0a0"/></g></svg>
<svg style="left:9px;top:687.7px;" width="38" height="35" viewBox="0 0 38 35"><g transform="translate(3.5,2)"><g transform="translate(15.5 15.5) scale(1.22) translate(-15.5 -15.5)"><path d="M9 16 Q9 9 15.5 9 Q22 9 22 16 Q22 23 15.5 23 Q9 23 9 16 Z" fill="#d6c6ec"/><path d="M9.5 16 Q15.5 14 21.5 16 M15.5 9.5 V22.5" stroke="#4a4a4a" stroke-width="0.8" fill="none"/></g><path d="M32 30 L32 26 L28 30 Z" fill="#a0a0a0"/></g></svg>
<svg style="left:9px;top:722.4px;" width="38" height="35" viewBox="0 0 38 35"><g transform="translate(3.5,2)"><g transform="translate(15.5 15.5) scale(1.22) translate(-15.5 -15.5)"><g fill="none" stroke="#e6e6e6" stroke-width="1"><path d="M12 12.5 L15 9 H24.5 V21 L20.5 25.5 H12 Z M12 12.5 H20.5 V25.5 M20.5 12.5 L24.5 9"/><path d="M9 14 L11 10.5 M9 14 V26"/></g><path d="M7 7 L10 5 V9 Z" fill="#d6c6ec"/></g><path d="M32 30 L32 26 L28 30 Z" fill="#a0a0a0"/></g></svg>
<svg style="left:9px;top:757.1px;" width="38" height="35" viewBox="0 0 38 35"><g transform="translate(3.5,2)"><g transform="translate(15.5 15.5) scale(1.22) translate(-15.5 -15.5)"><rect x="11.5" y="11.5" width="9" height="9" fill="none" stroke="#e6e6e6" stroke-width="1"/><path d="M11.5 11.5 L20.5 20.5 M20.5 11.5 L11.5 20.5" stroke="#1a1a1a" stroke-width="1.5"/><path d="M15.5 5 L13.5 8 H17.5 Z M15.5 26 L13.5 23 H17.5 Z M5 15.5 L8 13.5 V17.5 Z M26 15.5 L23 13.5 V17.5 Z" fill="#d6c6ec"/></g><path d="M32 30 L32 26 L28 30 Z" fill="#a0a0a0"/></g></svg>
<svg style="left:9px;top:791.8px;" width="38" height="35" viewBox="0 0 38 35"><g transform="translate(3.5,2)"><g transform="translate(15.5 15.5) scale(1.22) translate(-15.5 -15.5)"><path d="M6 15 L13 10 L26 19 L19 25 Z" fill="#d6c6ec"/><path d="M6 15 L19 25 M13 10 L26 19 M6 15 V17 L19 27 M26 19 V21 L19 27" fill="none" stroke="#e6e6e6" stroke-width="0.9"/><path d="M24 8 L27 6 V10 Z" fill="#d6c6ec"/></g><path d="M32 30 L32 26 L28 30 Z" fill="#a0a0a0"/></g></svg>
<svg style="left:9px;top:826.5px;" width="38" height="35" viewBox="0 0 38 35"><g transform="translate(3.5,2)"><g transform="translate(15.5 15.5) scale(1.22) translate(-15.5 -15.5)"><g fill="none" stroke="#e6e6e6" stroke-width="1"><path d="M13 12.5 L16 9 H24.5 V21 L20.5 25.5 H13 M13 12.5 H20.5 V25.5 M20.5 12.5 L24.5 9"/><path d="M7 20 L20 13 M7 20 L13 25.5"/></g><circle cx="7" cy="20" r="1.4" fill="#d6c6ec"/></g><path d="M32 30 L32 26 L28 30 Z" fill="#a0a0a0"/></g></svg>
<div class="t" style="left:65.10px;top:111.68px;font-size:11.6px;color:#e6e6e6;transform:scaleX(0.9930);transform-origin:0 0;text-shadow:0 0 2px #000;">User Perspective</div>
<div class="t" style="left:65.10px;top:129.88px;font-size:11.6px;color:#e6e6e6;text-shadow:0 0 2px #000;">(214) Cube</div>
<svg style="left:0px;top:0px;pointer-events:none;" width="1919" height="1051" viewBox="0 0 1919 1051"><line x1="1316" y1="151" x2="1316" y2="122" stroke="#3b82f0" stroke-width="2"/>
<line x1="1316" y1="151" x2="1348" y2="151" stroke="#7bbf1a" stroke-width="2"/>
<line x1="1316" y1="151" x2="1316" y2="165" stroke="#f5385a" stroke-width="2"/>
<circle cx="1284" cy="151" r="7.2" fill="#4a5a2a" stroke="#7bbf1a" stroke-width="1.4"/>
<circle cx="1316" cy="137" r="7.2" fill="none" stroke="#a83848" stroke-width="1.4"/>
<circle cx="1316" cy="180" r="7.2" fill="#35475a" stroke="#3b82f0" stroke-width="1.4"/>
<circle cx="1316" cy="122" r="8.2" fill="#3b82f0"/>
<circle cx="1348" cy="151" r="8.2" fill="#7bbf1a"/>
<circle cx="1316" cy="165" r="8.2" fill="#f5385a"/>
<text x="1316" y="126.3" font-family="Liberation Sans" font-weight="bold" font-size="11" fill="#0d1a2a" text-anchor="middle">Z</text>
<text x="1348" y="155.3" font-family="Liberation Sans" font-weight="bold" font-size="11" fill="#1a2a06" text-anchor="middle">Y</text>
<text x="1316" y="169.3" font-family="Liberation Sans" font-weight="bold" font-size="11" fill="#2a0a10" text-anchor="middle">X</text><circle cx="1344" cy="205.5" r="13.6" fill="#2e2e2e" fill-opacity="0.9"/><circle cx="1344" cy="236" r="13.6" fill="#2e2e2e" fill-opacity="0.9"/><circle cx="1344" cy="266" r="13.6" fill="#2e2e2e" fill-opacity="0.9"/><circle cx="1344" cy="296" r="13.6" fill="#2e2e2e" fill-opacity="0.9"/><circle cx="1346" cy="203.5" r="5" fill="none" stroke="#e6e6e6" stroke-width="1.3"/><path d="M1342.5 207 L1337.5 212 M1346 201 V206 M1343.5 203.5 H1348.5" stroke="#e6e6e6" stroke-width="1.4"/><path d="M1339 236 Q1338 233 1340 233 L1342 236 V228 Q1342 226.5 1343.3 226.5 Q1344.5 226.5 1344.5 228 V234 V227 Q1344.5 225.5 1346 225.5 Q1347.3 225.5 1347.3 227 V234 V228.5 Q1347.3 227 1348.6 227 Q1350 227 1350 228.5 V235 V231 Q1350 229.5 1351.2 229.5 Q1352.5 229.5 1352.5 231 V238 Q1352.5 244 1346.5 244 Q1342 244 1339 236 Z" fill="#e6e6e6"/><circle cx="1340.5" cy="261" r="3.5" fill="#e6e6e6"/><circle cx="1347" cy="261" r="3.5" fill="#e6e6e6"/><rect x="1337" y="263.5" width="12" height="8" fill="#e6e6e6"/><path d="M1349 267 L1353 264 V271 Z" fill="#e6e6e6"/><circle cx="1340.5" cy="261" r="1.2" fill="#2e2e2e"/><circle cx="1347" cy="261" r="1.2" fill="#2e2e2e"/><path d="M1337.5 303.5 L1340 289.5 H1348 L1350.5 303.5 Z M1338.5 298 H1349.5 M1339.3 293.5 H1348.7 M1342.7 289.5 L1342 303.5 M1345.3 289.5 L1346 303.5" fill="none" stroke="#e6e6e6" stroke-width="1.1"/></svg>
<div class="a" style="left:1588px;top:50px;width:331px;height:259px;background:#282828;border-radius:6px;"></div>
<div class="a" style="left:1588px;top:50px;width:331px;height:26px;background:#282828;border-radius:6px;border-bottom-left-radius:0;border-bottom-right-radius:0;"></div>
<div class="a" style="left:1597px;top:52.6px;width:30.5px;height:19.3px;background:#282828;border-radius:4px;border:1px solid #3a3a3a;"></div>
<svg style="left:1597px;top:52.6px;" width="31" height="19" viewBox="0 0 31 19"><g fill="#dcdcdc"><rect x="5" y="3" width="4" height="3"/><rect x="9.5" y="8" width="5.5" height="3"/><rect x="9.5" y="13" width="5.5" height="3"/></g><path d="M6.5 6 V14.5 H9.5 M6.5 9.5 H9.5" fill="none" stroke="#dcdcdc" stroke-width="1"/><path d="M19.0 7.7 L22.5 11.3 L26.0 7.7" fill="none" stroke="#cfcfcf" stroke-width="1.1"/></svg>
<div class="a" style="left:1634px;top:52.6px;width:30px;height:19.3px;background:#282828;border-radius:4px;border:1px solid #3a3a3a;"></div>
<svg style="left:1634px;top:52.6px;" width="30" height="19" viewBox="0 0 30 19"><g fill="none" stroke="#d6d6d6" stroke-width="1"><rect x="7.5" y="3.5" width="8" height="8"/><path d="M5.5 5.5 V13.5 H13.5 M3.5 7.5 V15.5 H11.5"/></g>
<path d="M8.5 10.5 L11 7 L13 9 L14.5 7.5 V10.5 Z" fill="#d6d6d6"/><circle cx="13" cy="5.5" r="1" fill="#d6d6d6"/><path d="M19.5 7.7 L23 11.3 L26.5 7.7" fill="none" stroke="#cfcfcf" stroke-width="1.1"/></svg>
<div class="a" style="left:1685.4px;top:52.6px;width:114.2px;height:19.3px;background:#1d1d1d;border-radius:5px;border:1px solid #303030;"></div>
<svg style="left:1685.4px;top:52.6px;" width="30" height="19" viewBox="0 0 30 19"><circle cx="12.5" cy="8" r="4.3" fill="none" stroke="#d8d8d8" stroke-width="1.1"/><path d="M9.5 11 L5 15.5" stroke="#d8d8d8" stroke-width="1.2"/></svg>
<div class="a" style="left:1855.6px;top:52.6px;width:31px;height:19.3px;background:#282828;border-radius:4px;border:1px solid #3a3a3a;"></div>
<svg style="left:1855.6px;top:52.6px;" width="31" height="19" viewBox="0 0 31 19"><path d="M3.5 3.5 H15.5 L10.5 10 V16 L8.5 14 V10 Z" fill="none" stroke="#d8d8d8" stroke-width="1.1"/><path d="M20.0 7.7 L23.5 11.3 L27.0 7.7" fill="none" stroke="#cfcfcf" stroke-width="1.1"/></svg>
<div class="a" style="left:1892.4px;top:52.6px;width:19px;height:19.3px;background:#3d3d3d;border-radius:4px;"></div>
<svg style="left:1892.4px;top:52.6px;" width="19" height="19" viewBox="0 0 19 19"><rect x="3" y="7" width="10" height="9" fill="none" stroke="#bdbdbd" stroke-width="1"/><path d="M3 9.5 H13 M6.5 12 H9.5" stroke="#bdbdbd" stroke-width="1"/><circle cx="13.5" cy="5.5" r="3.6" fill="#e6e6e6"/><path d="M13.5 3.5 V7.5 M11.5 5.5 H15.5" stroke="#3d3d3d" stroke-width="1.1"/></svg>
<div class="a" style="left:1588px;top:97px;width:331px;height:20px;background:#2b2b2b;"></div>
<div class="a" style="left:1588px;top:137px;width:331px;height:20px;background:#2b2b2b;"></div>
<div class="a" style="left:1588px;top:177px;width:331px;height:20px;background:#2b2b2b;"></div>
<div class="a" style="left:1588px;top:217px;width:331px;height:20px;background:#2b2b2b;"></div>
<div class="a" style="left:1588px;top:257px;width:331px;height:20px;background:#2b2b2b;"></div>
<div class="a" style="left:1608.8px;top:78.5px;width:18.6px;height:18px;background:#424242;border-radius:4px;border:1px solid #555;"></div>
<svg style="left:1610px;top:79.5px;" width="16" height="16" viewBox="0 0 16 16"><rect x="2" y="2.5" width="12" height="3" fill="#e6e6e6"/><rect x="2.5" y="6.5" width="11" height="7.5" fill="#e6e6e6"/><rect x="6" y="8.5" width="4" height="1.5" fill="#424242"/></svg>
<div class="t" style="left:1632.50px;top:80.88px;font-size:11.6px;color:#e6e6e6;">Scene Collection</div>
<svg style="left:1612px;top:101px;" width="10" height="10" viewBox="0 0 10 10"><path d="M1 2 L7 2 L4 7.5 Z" fill="#bfbfbf"/></svg>
<svg style="left:1631px;top:99px;" width="16" height="16" viewBox="0 0 16 16"><rect x="1" y="1" width="13" height="3.2" fill="#d8d8d8"/><rect x="1.5" y="5.2" width="12" height="8.5" fill="#d8d8d8"/><rect x="5.5" y="7" width="4" height="1.5" fill="#282828"/></svg>
<div class="t" style="left:1652.00px;top:100.88px;font-size:11.6px;color:#e6e6e6;">Collection</div>
<svg style="left:1590px;top:118px;" width="18" height="18" viewBox="0 0 18 18"><g fill="none" stroke="#cfcfcf" stroke-width="1"><rect x="1.5" y="2.5" width="3" height="3"/><rect x="1.5" y="12.5" width="3" height="3"/><rect x="11.5" y="12.5" width="3" height="3"/><path d="M4.5 4 H10 M3 5.5 V12.5 M4.5 14 H11.5 M13 9 V12.5"/></g><rect x="10" y="1.5" width="5" height="5" fill="#e0e0e0"/></svg>
<div class="a" style="left:1617px;top:122px;width:1px;height:9px;background:#4a4a4a;"></div>
<svg style="left:1634px;top:122px;" width="10" height="10" viewBox="0 0 10 10"><path d="M1 1 L6.5 4 L1 7 Z" fill="#cfcfcf"/></svg>
<div class="a" style="left:1648.7px;top:117.5px;width:19.5px;height:19px;background:#4a4a4a;border-radius:5px;border:1px solid #5a5a5a;"></div>
<svg style="left:1648.7px;top:117.5px;" width="20" height="19" viewBox="0 0 20 19"><path d="M4 4 H16 L10 16 Z" fill="none" stroke="#e8913a" stroke-width="2.2" stroke-linejoin="round"/><path d="M7 6.5 H13 L10 12.5 Z" fill="#e8913a"/></svg>
<div class="t" style="left:1672.30px;top:120.88px;font-size:11.6px;color:#e6e6e6;">Cube</div>
<svg style="left:1721px;top:119px;" width="16" height="16" viewBox="0 0 16 16"><path d="M2 13.5 L8 7.5 M7 8 Q5.5 3.5 9.5 2.5 L11 2.3 L9 5 L11 7 L13.5 5 Q14 9.5 9 9" fill="none" stroke="#5d8de0" stroke-width="1.8" stroke-linecap="round"/></svg>
<svg style="left:1741px;top:119px;" width="16" height="16" viewBox="0 0 16 16"><g fill="#b8b8b8"><rect x="1.5" y="6" width="3" height="3"/><rect x="5.5" y="2" width="3" height="3"/><rect x="5.5" y="6" width="3" height="3"/><rect x="5.5" y="10" width="3" height="3"/><rect x="9.5" y="6" width="3" height="3"/><rect x="9.5" y="10" width="3" height="3"/></g><g fill="none" stroke="#b8b8b8" stroke-width="0.8"><rect x="9.8" y="2.3" width="2.5" height="2.5"/><rect x="1.8" y="10.3" width="2.5" height="2.5"/></g></svg>
<div class="a" style="left:1760px;top:117.5px;width:19.5px;height:19px;background:#1f4a40;border-radius:5px;border:1px solid #2c6b5c;"></div>
<svg style="left:1760px;top:117.5px;" width="20" height="19" viewBox="0 0 20 19"><path d="M4.5 4.5 H15.5 L10 15 Z" fill="none" stroke="#3fd7a7" stroke-width="1.2"/><g fill="#1f4a40" stroke="#3fd7a7" stroke-width="1"><rect x="3" y="3" width="3" height="3"/><rect x="14" y="3" width="3" height="3"/><rect x="8.5" y="13.5" width="3" height="3"/></g></svg>
<svg style="left:1612px;top:141px;" width="10" height="10" viewBox="0 0 10 10"><path d="M1 2 L7 2 L4 7.5 Z" fill="#8a8a8a"/></svg>
<svg style="left:1631px;top:139px;" width="16" height="16" viewBox="0 0 16 16"><rect x="1" y="1" width="13" height="3.2" fill="#8e8e8e"/><rect x="1.5" y="5.2" width="12" height="8.5" fill="#8e8e8e"/><rect x="5.5" y="7" width="4" height="1.5" fill="#282828"/></svg>
<div class="t" style="left:1652.00px;top:140.88px;font-size:11.6px;color:#9a9a9a;">References</div>
<div class="a" style="left:1617px;top:161px;width:1px;height:70px;background:#4a4a4a;"></div>
<svg style="left:1632px;top:161px;" width="10" height="10" viewBox="0 0 10 10"><path d="M1 2 L7 2 L4 7.5 Z" fill="#8a8a8a"/></svg>
<svg style="left:1650.5px;top:158.5px;" width="16" height="16" viewBox="0 0 16 16"><rect x="1" y="1" width="14" height="14" fill="#8a5a34"/><path d="M3.5 13 L8 5 L12.5 13 Z" fill="#2a2a2a"/></svg>
<div class="t" style="left:1672.30px;top:160.88px;font-size:11.6px;color:#9a9a9a;">Front</div>
<svg style="left:1670.5px;top:178.5px;" width="16" height="16" viewBox="0 0 16 16"><rect x="1.5" y="1.5" width="12" height="12" fill="none" stroke="#d84a64" stroke-width="1.1"/><path d="M1.5 13.5 L6 6 L10 13.5 Z" fill="#d84a64"/><circle cx="10.5" cy="4.5" r="1.2" fill="#d84a64"/></svg>
<div class="t" style="left:1692.40px;top:180.88px;font-size:11.6px;color:#e6e6e6;">turnaround.jpg.004</div>
<svg style="left:1632px;top:201px;" width="10" height="10" viewBox="0 0 10 10"><path d="M1 2 L7 2 L4 7.5 Z" fill="#8a8a8a"/></svg>
<svg style="left:1650.5px;top:198.5px;" width="16" height="16" viewBox="0 0 16 16"><rect x="1" y="1" width="14" height="14" fill="#8a5a34"/><path d="M3.5 13 L8 5 L12.5 13 Z" fill="#2a2a2a"/></svg>
<div class="t" style="left:1672.30px;top:200.88px;font-size:11.6px;color:#9a9a9a;">Side</div>
<svg style="left:1670.5px;top:218.5px;" width="16" height="16" viewBox="0 0 16 16"><rect x="1.5" y="1.5" width="12" height="12" fill="none" stroke="#d84a64" stroke-width="1.1"/><path d="M1.5 13.5 L6 6 L10 13.5 Z" fill="#d84a64"/><circle cx="10.5" cy="4.5" r="1.2" fill="#d84a64"/></svg>
<div class="t" style="left:1692.40px;top:220.88px;font-size:11.6px;color:#e6e6e6;">turnaround.jpg</div>
<svg style="left:1835px;top:99.7px;" width="12" height="12" viewBox="0 0 12 12"><rect x="0.5" y="0.5" width="11" height="11" rx="1.5" fill="#e6e6e6"/><path d="M2.5 6 L5 8.5 L9.5 3" fill="none" stroke="#1a1a1a" stroke-width="1.6"/></svg>
<svg style="left:1854.5px;top:99.2px;" width="14" height="14" viewBox="0 0 14 14"><path d="M1 2 L13 6 L8 8 L6 13 Z" fill="#e6e6e6"/></svg>
<svg style="left:1873px;top:98.7px;" width="14" height="14" viewBox="0 0 14 14"><path d="M1 7 Q7 1 13 7 Q7 13 1 7 Z" fill="none" stroke="#e6e6e6" stroke-width="1.3"/><circle cx="7" cy="7" r="2.3" fill="#e6e6e6"/></svg>
<svg style="left:1892.5px;top:98.2px;" width="15" height="15" viewBox="0 0 15 15"><rect x="1" y="3.5" width="13" height="10" rx="1" fill="#e6e6e6"/><rect x="4.5" y="2" width="6" height="2" rx="0.8" fill="#e6e6e6"/><circle cx="7.5" cy="8.5" r="3.7" fill="#282828"/><circle cx="7.5" cy="8.5" r="2.8" fill="#e6e6e6"/><circle cx="7.5" cy="8.5" r="2" fill="#282828"/><circle cx="7.5" cy="8.5" r="1.1" fill="#e6e6e6"/></svg>
<svg style="left:1854.5px;top:119.2px;" width="14" height="14" viewBox="0 0 14 14"><path d="M1 2 L13 6 L8 8 L6 13 Z" fill="#e6e6e6"/></svg>
<svg style="left:1873px;top:118.7px;" width="14" height="14" viewBox="0 0 14 14"><path d="M1 7 Q7 1 13 7 Q7 13 1 7 Z" fill="none" stroke="#e6e6e6" stroke-width="1.3"/><circle cx="7" cy="7" r="2.3" fill="#e6e6e6"/></svg>
<svg style="left:1892.5px;top:118.2px;" width="15" height="15" viewBox="0 0 15 15"><rect x="1" y="3.5" width="13" height="10" rx="1" fill="#e6e6e6"/><rect x="4.5" y="2" width="6" height="2" rx="0.8" fill="#e6e6e6"/><circle cx="7.5" cy="8.5" r="3.7" fill="#282828"/><circle cx="7.5" cy="8.5" r="2.8" fill="#e6e6e6"/><circle cx="7.5" cy="8.5" r="2" fill="#282828"/><circle cx="7.5" cy="8.5" r="1.1" fill="#e6e6e6"/></svg>
<svg style="left:1835px;top:139.7px;" width="12" height="12" viewBox="0 0 12 12"><rect x="0.5" y="0.5" width="11" height="11" rx="1.5" fill="#e6e6e6"/><path d="M2.5 6 L5 8.5 L9.5 3" fill="none" stroke="#1a1a1a" stroke-width="1.6"/></svg>
<svg style="left:1892.5px;top:138.2px;" width="15" height="15" viewBox="0 0 15 15"><rect x="1" y="3.5" width="13" height="10" rx="1" fill="#e6e6e6"/><rect x="4.5" y="2" width="6" height="2" rx="0.8" fill="#e6e6e6"/><circle cx="7.5" cy="8.5" r="3.7" fill="#282828"/><circle cx="7.5" cy="8.5" r="2.8" fill="#e6e6e6"/><circle cx="7.5" cy="8.5" r="2" fill="#282828"/><circle cx="7.5" cy="8.5" r="1.1" fill="#e6e6e6"/></svg>
<svg style="left:1854.5px;top:159.2px;" width="14" height="14" viewBox="0 0 14 14"><path d="M1 2 L13 6 L8 8 L6 13 Z" fill="#9a9a9a"/></svg>
<svg style="left:1873px;top:158.7px;" width="14" height="14" viewBox="0 0 14 14"><path d="M1 7 Q7 1 13 7 Q7 13 1 7 Z" fill="none" stroke="#bdbdbd" stroke-width="1.3"/><circle cx="7" cy="7" r="2.3" fill="#bdbdbd"/></svg>
<svg style="left:1892.5px;top:158.2px;" width="15" height="15" viewBox="0 0 15 15"><rect x="1" y="3.5" width="13" height="10" rx="1" fill="#e6e6e6"/><rect x="4.5" y="2" width="6" height="2" rx="0.8" fill="#e6e6e6"/><circle cx="7.5" cy="8.5" r="3.7" fill="#282828"/><circle cx="7.5" cy="8.5" r="2.8" fill="#e6e6e6"/><circle cx="7.5" cy="8.5" r="2" fill="#282828"/><circle cx="7.5" cy="8.5" r="1.1" fill="#e6e6e6"/></svg>
<svg style="left:1854.5px;top:199.2px;" width="14" height="14" viewBox="0 0 14 14"><path d="M1 2 L13 6 L8 8 L6 13 Z" fill="#9a9a9a"/></svg>
<svg style="left:1873px;top:198.7px;" width="14" height="14" viewBox="0 0 14 14"><path d="M1 7 Q7 1 13 7 Q7 13 1 7 Z" fill="none" stroke="#bdbdbd" stroke-width="1.3"/><circle cx="7" cy="7" r="2.3" fill="#bdbdbd"/></svg>
<svg style="left:1892.5px;top:198.2px;" width="15" height="15" viewBox="0 0 15 15"><rect x="1" y="3.5" width="13" height="10" rx="1" fill="#e6e6e6"/><rect x="4.5" y="2" width="6" height="2" rx="0.8" fill="#e6e6e6"/><circle cx="7.5" cy="8.5" r="3.7" fill="#282828"/><circle cx="7.5" cy="8.5" r="2.8" fill="#e6e6e6"/><circle cx="7.5" cy="8.5" r="2" fill="#282828"/><circle cx="7.5" cy="8.5" r="1.1" fill="#e6e6e6"/></svg>
<svg style="left:1854.5px;top:139.2px;" width="14" height="14" viewBox="0 0 14 14"><path d="M1.5 2.5 L12 6.5" stroke="#777" stroke-width="1" fill="none"/><path d="M1.5 2.5 L6 12.5" stroke="#777" stroke-width="1"/></svg>
<svg style="left:1873px;top:138.7px;" width="14" height="14" viewBox="0 0 14 14"><path d="M1.5 6 Q7 11 12.5 6" fill="none" stroke="#777" stroke-width="1"/></svg>
<div class="a" style="left:1588px;top:312px;width:331px;height:739px;background:#303030;border-radius:6px;border-bottom-left-radius:0;border-bottom-right-radius:0;"></div>
<div class="a" style="left:1596px;top:314.9px;width:31.5px;height:18.5px;background:#303030;border-radius:4px;border:1px solid #3d3d3d;"></div>
<svg style="left:1596px;top:314.9px;" width="32" height="19" viewBox="0 0 32 19"><rect x="4" y="3" width="11" height="5.5" rx="2.75" fill="#dcdcdc"/><rect x="4" y="10" width="11" height="5.5" rx="2.75" fill="#dcdcdc"/><rect x="9.5" y="4.2" width="4.3" height="3.1" rx="1.5" fill="#303030"/><rect x="9.5" y="11.2" width="4.3" height="3.1" rx="1.5" fill="#303030"/><path d="M20.0 7.7 L23.5 11.3 L27.0 7.7" fill="none" stroke="#cfcfcf" stroke-width="1.1"/></svg>
<div class="a" style="left:1697.6px;top:314.6px;width:114px;height:19px;background:#1d1d1d;border-radius:5px;border:1px solid #353535;"></div>
<svg style="left:1697.6px;top:314.6px;" width="30" height="19" viewBox="0 0 30 19"><circle cx="12.5" cy="8" r="4.3" fill="none" stroke="#d8d8d8" stroke-width="1.1"/><path d="M9.5 11 L5 15.5" stroke="#d8d8d8" stroke-width="1.2"/></svg>
<div class="a" style="left:1892.4px;top:314.6px;width:19.3px;height:19px;background:#303030;border-radius:4px;border:1px solid #3d3d3d;"></div>
<svg style="left:1892.4px;top:314.6px;" width="19" height="19" viewBox="0 0 19 19"><path d="M6.1 7.7 L9.6 11.3 L13.1 7.7" fill="none" stroke="#cfcfcf" stroke-width="1.1"/></svg>
<div class="a" style="left:1588px;top:337px;width:28px;height:714px;background:#1f1f1f;"></div>
<div class="a" style="left:1588px;top:371px;width:28px;height:2px;background:#1a1a1a;"></div>
<div class="a" style="left:1588px;top:522px;width:28px;height:2px;background:#1a1a1a;"></div>
<div class="a" style="left:1590.4px;top:529.7px;width:26px;height:25.6px;background:#303030;border-radius:5px 0 0 5px;"></div>
<svg style="left:1595px;top:350.7px;" width="16" height="16" viewBox="0 0 16 16"><path d="M4 2 V8" stroke="#c8c8c8" stroke-width="1"/><ellipse cx="4" cy="11.5" rx="2.3" ry="3" fill="#c8c8c8"/><path d="M11 6 V14" stroke="#c8c8c8" stroke-width="2"/><path d="M8.5 2 V5 Q8.5 7 11 7 Q13.5 7 13.5 5 V2" fill="none" stroke="#c8c8c8" stroke-width="1.6"/></svg>
<svg style="left:1595px;top:386px;" width="16" height="16" viewBox="0 0 16 16"><rect x="1.5" y="5" width="13" height="9" fill="none" stroke="#c8c8c8" stroke-width="1.4"/><rect x="5" y="2.5" width="5" height="2.5" fill="#c8c8c8"/><path d="M3.5 8 H10.5 M3.5 10.5 H10.5" stroke="#c8c8c8" stroke-width="1"/><rect x="12" y="7" width="1.6" height="1.6" fill="#c8c8c8"/><rect x="12" y="10.5" width="1.6" height="1.6" fill="#c8c8c8"/></svg>
<svg style="left:1595px;top:414.5px;" width="16" height="16" viewBox="0 0 16 16"><rect x="1.5" y="2" width="13" height="4" rx="1" fill="#c8c8c8"/><rect x="3.5" y="6" width="9" height="8" fill="#c8c8c8"/><path d="M5 13 L7.5 9 L9.5 11.5 L11 10 V13 Z" fill="#1f1f1f"/></svg>
<svg style="left:1595px;top:442px;" width="16" height="16" viewBox="0 0 16 16"><g fill="none" stroke="#c8c8c8" stroke-width="1"><rect x="5.5" y="1.5" width="9" height="9"/><path d="M3.5 3.5 V12.5 H12.5 M1.5 5.5 V14.5 H10.5"/></g><path d="M6.5 10 L9 6.5 L11 8.5 L14 5 V10 Z" fill="#c8c8c8"/></svg>
<svg style="left:1595px;top:470.7px;" width="16" height="16" viewBox="0 0 16 16"><path d="M5.5 2 L2 9.5 Q2 12.5 5 12.5 Q8 12.5 8 9.5 Z" fill="#c8c8c8"/><circle cx="12" cy="3.5" r="2" fill="#c8c8c8"/><circle cx="9.5" cy="11" r="3.3" fill="#1f1f1f" stroke="#c8c8c8" stroke-width="1.1"/></svg>
<svg style="left:1595px;top:498.7px;" width="16" height="16" viewBox="0 0 16 16"><circle cx="8" cy="8" r="6" fill="none" stroke="#c8535f" stroke-width="1.3"/><path d="M3 6 Q6 5 7 8 Q8 11 6 13 M9 3 Q11 6 13.5 5 M10 10 Q12 9 13.5 11" fill="none" stroke="#c8535f" stroke-width="1.6"/></svg>
<svg style="left:1595px;top:535px;" width="16" height="16" viewBox="0 0 16 16"><g fill="none" stroke="#e8913a" stroke-width="1.1"><path d="M1.5 5 V1.5 H5 M11 1.5 H14.5 V5 M14.5 11 V14.5 H11 M5 14.5 H1.5 V11"/></g><rect x="4" y="4" width="8" height="8" fill="#e8913a"/></svg>
<svg style="left:1595px;top:563px;" width="16" height="16" viewBox="0 0 16 16"><path d="M2.5 13.5 L8.5 7.5 M8 8 Q6.5 3.5 10.5 2.5 L12 2.3 L10 5 L12 7 L14.5 5 Q15 9.5 10 9" fill="none" stroke="#5d8de0" stroke-width="2" stroke-linecap="round"/></svg>
<svg style="left:1595px;top:590.7px;" width="16" height="16" viewBox="0 0 16 16"><g stroke="#5d8de0" stroke-width="1.2"><path d="M3.5 3.5 L12 6 M3.5 3.5 L4 13 M3.5 3.5 L12 12"/></g><g fill="#5d8de0"><circle cx="3.5" cy="3.5" r="2.3"/><circle cx="12.5" cy="6" r="1.6"/><circle cx="4" cy="13" r="1.6"/><circle cx="12.5" cy="12.5" r="1.8"/></g></svg>
<svg style="left:1595px;top:618.6px;" width="16" height="16" viewBox="0 0 16 16"><path d="M13 4.5 A6.3 6.3 0 1 0 13.5 11" fill="none" stroke="#5d8de0" stroke-width="1.5"/><circle cx="8" cy="8" r="2.8" fill="#5d8de0"/><circle cx="13" cy="3.5" r="1.6" fill="#5d8de0"/></svg>
<svg style="left:1595px;top:646.4px;" width="16" height="16" viewBox="0 0 16 16"><g transform="rotate(-30 8 8)"><rect x="1" y="4" width="14" height="8" rx="4" fill="none" stroke="#5d8de0" stroke-width="1.5"/><circle cx="6" cy="8" r="2.5" fill="none" stroke="#5d8de0" stroke-width="1.4"/></g></svg>
<svg style="left:1595px;top:674.3px;" width="16" height="16" viewBox="0 0 16 16"><path d="M3.5 3.5 H12.5 L8 13 Z" fill="none" stroke="#3fd7a7" stroke-width="1.3"/><g fill="#1f1f1f" stroke="#3fd7a7" stroke-width="1.1"><rect x="1.5" y="1.5" width="3.2" height="3.2"/><rect x="11.3" y="1.5" width="3.2" height="3.2"/><rect x="6.4" y="11.5" width="3.2" height="3.2"/></g></svg>
<svg style="left:1595px;top:702.8px;" width="16" height="16" viewBox="0 0 16 16"><circle cx="8" cy="8" r="6.5" fill="#c8535f"/><path d="M8 8 V1.5 A6.5 6.5 0 0 0 1.5 8 Z M8 8 H14.5 A6.5 6.5 0 0 1 8 14.5 Z" fill="#1f1f1f"/></svg>
<svg style="left:1626px;top:347px;" width="16" height="16" viewBox="0 0 16 16"><g fill="none" stroke="#d8d8d8" stroke-width="1.1"><path d="M1.5 5 V1.5 H5 M11 1.5 H14.5 V5 M14.5 11 V14.5 H11 M5 14.5 H1.5 V11"/></g><rect x="4" y="4" width="8" height="8" fill="#e6e6e6"/></svg>
<div class="t" style="left:1650.00px;top:348.58px;font-size:11.6px;color:#e6e6e6;">Cube</div>
<svg style="left:1895px;top:347px;" width="16" height="16" viewBox="0 0 16 16"><path d="M1.5 14.5 L6 10 M4.5 7 L9 11.5 M6 6 L10 1.5 L14.5 6 L10 10 Z" fill="none" stroke="#bdbdbd" stroke-width="1"/></svg>
<div class="a" style="left:1624.5px;top:381.7px;width:287.2px;height:18.5px;background:#1d1d1d;border-radius:4px;border:1px solid #282828;"></div>
<div class="a" style="left:1655px;top:382px;width:1px;height:18px;background:#303030;"></div>
<div class="a" style="left:1625px;top:382.2px;width:30px;height:17.5px;background:#262626;border-radius:4px;border-top-right-radius:0;border-bottom-right-radius:0;"></div>
<svg style="left:1624.5px;top:381.7px;" width="32" height="18" viewBox="0 0 32 18"><g fill="none" stroke="#d8d8d8" stroke-width="1.1"><path d="M3.5 6 V2.5 H7 M14 2.5 H17.5 V6 M17.5 12.5 V16 H14 M7 16 H3.5 V12.5"/></g><rect x="6.5" y="5" width="8.2" height="8.2" fill="#e6e6e6"/><path d="M21.5 8.2 L25 11.8 L28.5 8.2" fill="none" stroke="#cfcfcf" stroke-width="1.1"/></svg>
<div class="t" style="left:1663.00px;top:385.48px;font-size:11.6px;color:#e6e6e6;">Cube</div>
<div class="a" style="left:1624px;top:411.4px;width:287.7px;height:280px;background:#3d3d3d;border-radius:5px;"></div>
<svg style="left:1624px;top:411.4px;" width="288" height="30" viewBox="0 0 288 30"><path d="M9 11.5 L13 15.5 L17 11.5" fill="none" stroke="#d8d8d8" stroke-width="1"/><rect x="270.9" y="10.1" width="1.3" height="1.2" fill="#a8a8a8"/><rect x="270.9" y="11.4" width="1.3" height="1.2" fill="#000"/><rect x="270.9" y="13.1" width="1.3" height="1.2" fill="#a8a8a8"/><rect x="270.9" y="14.4" width="1.3" height="1.2" fill="#000"/><rect x="273.9" y="10.1" width="1.3" height="1.2" fill="#a8a8a8"/><rect x="273.9" y="11.4" width="1.3" height="1.2" fill="#000"/><rect x="273.9" y="13.1" width="1.3" height="1.2" fill="#a8a8a8"/><rect x="273.9" y="14.4" width="1.3" height="1.2" fill="#000"/><rect x="276.9" y="10.1" width="1.3" height="1.2" fill="#a8a8a8"/><rect x="276.9" y="11.4" width="1.3" height="1.2" fill="#000"/><rect x="276.9" y="13.1" width="1.3" height="1.2" fill="#a8a8a8"/><rect x="276.9" y="14.4" width="1.3" height="1.2" fill="#000"/><rect x="279.9" y="10.1" width="1.3" height="1.2" fill="#a8a8a8"/><rect x="279.9" y="11.4" width="1.3" height="1.2" fill="#000"/><rect x="279.9" y="13.1" width="1.3" height="1.2" fill="#a8a8a8"/><rect x="279.9" y="14.4" width="1.3" height="1.2" fill="#000"/></svg>
<div class="t" style="left:1646.80px;top:418.38px;font-size:11.6px;color:#e6e6e6;">Transform</div>
<div class="a" style="left:1738px;top:445.3px;width:125px;height:59.550000000000004px;background:#545454;border-radius:4px;"></div>
<div class="a" style="left:1738px;top:464.65000000000003px;width:125px;height:1px;background:#3d3d3d;"></div>
<div class="a" style="left:1738px;top:484.5px;width:125px;height:1px;background:#3d3d3d;"></div>
<div class="t" style="left:1790.83px;top:447.88px;font-size:11.6px;color:#e6e6e6;">0 m</div>
<svg style="left:1866px;top:448.3px;" width="16" height="14" viewBox="0 0 16 14"><path d="M3 6.5 V4.5 Q3 1.5 6 1.5 Q8.5 1.5 9 4" fill="none" stroke="#e0e0e0" stroke-width="1.1"/><rect x="5.5" y="6.5" width="8" height="6" fill="none" stroke="#e0e0e0" stroke-width="1.1"/><rect x="9" y="9" width="1.2" height="1.5" fill="#e0e0e0"/></svg>
<svg style="left:1889px;top:450.3px;" width="10" height="10" viewBox="0 0 10 10"><circle cx="5" cy="5" r="2.2" fill="#e0e0e0"/></svg>
<div class="t" style="left:1790.83px;top:467.73px;font-size:11.6px;color:#e6e6e6;">0 m</div>
<svg style="left:1866px;top:468.15000000000003px;" width="16" height="14" viewBox="0 0 16 14"><path d="M3 6.5 V4.5 Q3 1.5 6 1.5 Q8.5 1.5 9 4" fill="none" stroke="#e0e0e0" stroke-width="1.1"/><rect x="5.5" y="6.5" width="8" height="6" fill="none" stroke="#e0e0e0" stroke-width="1.1"/><rect x="9" y="9" width="1.2" height="1.5" fill="#e0e0e0"/></svg>
<svg style="left:1889px;top:470.15000000000003px;" width="10" height="10" viewBox="0 0 10 10"><circle cx="5" cy="5" r="2.2" fill="#e0e0e0"/></svg>
<div class="t" style="left:1790.83px;top:487.58px;font-size:11.6px;color:#e6e6e6;">0 m</div>
<svg style="left:1866px;top:488.0px;" width="16" height="14" viewBox="0 0 16 14"><path d="M3 6.5 V4.5 Q3 1.5 6 1.5 Q8.5 1.5 9 4" fill="none" stroke="#e0e0e0" stroke-width="1.1"/><rect x="5.5" y="6.5" width="8" height="6" fill="none" stroke="#e0e0e0" stroke-width="1.1"/><rect x="9" y="9" width="1.2" height="1.5" fill="#e0e0e0"/></svg>
<svg style="left:1889px;top:490.0px;" width="10" height="10" viewBox="0 0 10 10"><circle cx="5" cy="5" r="2.2" fill="#e0e0e0"/></svg>
<div class="a" style="left:1738px;top:510.4px;width:125px;height:59.550000000000004px;background:#545454;border-radius:4px;"></div>
<div class="a" style="left:1738px;top:529.75px;width:125px;height:1px;background:#3d3d3d;"></div>
<div class="a" style="left:1738px;top:549.6px;width:125px;height:1px;background:#3d3d3d;"></div>
<div class="t" style="left:1794.95px;top:512.98px;font-size:11.6px;color:#e6e6e6;">0°</div>
<svg style="left:1866px;top:513.4px;" width="16" height="14" viewBox="0 0 16 14"><path d="M3 6.5 V4.5 Q3 1.5 6 1.5 Q8.5 1.5 9 4" fill="none" stroke="#e0e0e0" stroke-width="1.1"/><rect x="5.5" y="6.5" width="8" height="6" fill="none" stroke="#e0e0e0" stroke-width="1.1"/><rect x="9" y="9" width="1.2" height="1.5" fill="#e0e0e0"/></svg>
<svg style="left:1889px;top:515.4px;" width="10" height="10" viewBox="0 0 10 10"><circle cx="5" cy="5" r="2.2" fill="#e0e0e0"/></svg>
<div class="t" style="left:1794.95px;top:532.83px;font-size:11.6px;color:#e6e6e6;">0°</div>
<svg style="left:1866px;top:533.25px;" width="16" height="14" viewBox="0 0 16 14"><path d="M3 6.5 V4.5 Q3 1.5 6 1.5 Q8.5 1.5 9 4" fill="none" stroke="#e0e0e0" stroke-width="1.1"/><rect x="5.5" y="6.5" width="8" height="6" fill="none" stroke="#e0e0e0" stroke-width="1.1"/><rect x="9" y="9" width="1.2" height="1.5" fill="#e0e0e0"/></svg>
<svg style="left:1889px;top:535.25px;" width="10" height="10" viewBox="0 0 10 10"><circle cx="5" cy="5" r="2.2" fill="#e0e0e0"/></svg>
<div class="t" style="left:1794.95px;top:552.68px;font-size:11.6px;color:#e6e6e6;">0°</div>
<svg style="left:1866px;top:553.1px;" width="16" height="14" viewBox="0 0 16 14"><path d="M3 6.5 V4.5 Q3 1.5 6 1.5 Q8.5 1.5 9 4" fill="none" stroke="#e0e0e0" stroke-width="1.1"/><rect x="5.5" y="6.5" width="8" height="6" fill="none" stroke="#e0e0e0" stroke-width="1.1"/><rect x="9" y="9" width="1.2" height="1.5" fill="#e0e0e0"/></svg>
<svg style="left:1889px;top:555.1px;" width="10" height="10" viewBox="0 0 10 10"><circle cx="5" cy="5" r="2.2" fill="#e0e0e0"/></svg>
<div class="a" style="left:1738px;top:600px;width:125px;height:59.550000000000004px;background:#545454;border-radius:4px;"></div>
<div class="a" style="left:1738px;top:619.35px;width:125px;height:1px;background:#3d3d3d;"></div>
<div class="a" style="left:1738px;top:639.2px;width:125px;height:1px;background:#3d3d3d;"></div>
<div class="t" style="left:1785.99px;top:602.58px;font-size:11.6px;color:#e6e6e6;">0.107</div>
<svg style="left:1866px;top:603.0px;" width="16" height="14" viewBox="0 0 16 14"><path d="M3 6.5 V4.5 Q3 1.5 6 1.5 Q8.5 1.5 9 4" fill="none" stroke="#e0e0e0" stroke-width="1.1"/><rect x="5.5" y="6.5" width="8" height="6" fill="none" stroke="#e0e0e0" stroke-width="1.1"/><rect x="9" y="9" width="1.2" height="1.5" fill="#e0e0e0"/></svg>
<svg style="left:1889px;top:605.0px;" width="10" height="10" viewBox="0 0 10 10"><circle cx="5" cy="5" r="2.2" fill="#e0e0e0"/></svg>
<div class="t" style="left:1785.99px;top:622.43px;font-size:11.6px;color:#e6e6e6;">0.140</div>
<svg style="left:1866px;top:622.85px;" width="16" height="14" viewBox="0 0 16 14"><path d="M3 6.5 V4.5 Q3 1.5 6 1.5 Q8.5 1.5 9 4" fill="none" stroke="#e0e0e0" stroke-width="1.1"/><rect x="5.5" y="6.5" width="8" height="6" fill="none" stroke="#e0e0e0" stroke-width="1.1"/><rect x="9" y="9" width="1.2" height="1.5" fill="#e0e0e0"/></svg>
<svg style="left:1889px;top:624.85px;" width="10" height="10" viewBox="0 0 10 10"><circle cx="5" cy="5" r="2.2" fill="#e0e0e0"/></svg>
<div class="t" style="left:1785.99px;top:642.28px;font-size:11.6px;color:#e6e6e6;">0.403</div>
<svg style="left:1866px;top:642.7px;" width="16" height="14" viewBox="0 0 16 14"><path d="M3 6.5 V4.5 Q3 1.5 6 1.5 Q8.5 1.5 9 4" fill="none" stroke="#e0e0e0" stroke-width="1.1"/><rect x="5.5" y="6.5" width="8" height="6" fill="none" stroke="#e0e0e0" stroke-width="1.1"/><rect x="9" y="9" width="1.2" height="1.5" fill="#e0e0e0"/></svg>
<svg style="left:1889px;top:644.7px;" width="10" height="10" viewBox="0 0 10 10"><circle cx="5" cy="5" r="2.2" fill="#e0e0e0"/></svg>
<div class="t" style="left:1673.18px;top:448.58px;font-size:11.6px;color:#e0e0e0;">Location X</div>
<div class="t" style="left:1720.26px;top:468.38px;font-size:11.6px;color:#e0e0e0;">Y</div>
<div class="t" style="left:1720.91px;top:488.18px;font-size:11.6px;color:#e0e0e0;">Z</div>
<div class="t" style="left:1673.83px;top:513.78px;font-size:11.6px;color:#e0e0e0;">Rotation X</div>
<div class="t" style="left:1720.26px;top:533.58px;font-size:11.6px;color:#e0e0e0;">Y</div>
<div class="t" style="left:1720.91px;top:553.38px;font-size:11.6px;color:#e0e0e0;">Z</div>
<div class="t" style="left:1698.98px;top:578.98px;font-size:11.6px;color:#e0e0e0;">Mode</div>
<div class="t" style="left:1688.02px;top:603.38px;font-size:11.6px;color:#e0e0e0;">Scale X</div>
<div class="t" style="left:1720.26px;top:623.18px;font-size:11.6px;color:#e0e0e0;">Y</div>
<div class="t" style="left:1720.91px;top:642.98px;font-size:11.6px;color:#e0e0e0;">Z</div>
<div class="a" style="left:1738px;top:575.4px;width:125px;height:17.3px;background:#1d1d1d;border-radius:4px;"></div>
<div class="t" style="left:1745.00px;top:577.98px;font-size:11.6px;color:#e6e6e6;">XYZ Euler</div>
<svg style="left:1738px;top:575.4px;" width="125" height="17" viewBox="0 0 125 17"><path d="M113.5 7.2 L117 10.8 L120.5 7.2" fill="none" stroke="#cfcfcf" stroke-width="1.1"/></svg>
<svg style="left:1889px;top:579px;" width="10" height="10" viewBox="0 0 10 10"><circle cx="5" cy="5" r="2.2" fill="#e0e0e0"/></svg>
<svg style="left:1643px;top:671px;" width="16" height="16" viewBox="0 0 16 16"><path d="M6 4 L10 8 L6 12" fill="none" stroke="#d8d8d8" stroke-width="1"/></svg>
<div class="t" style="left:1660.40px;top:673.98px;font-size:11.6px;color:#e6e6e6;">Delta Transform</div>
<div class="a" style="left:1624px;top:694.7px;width:287.7px;height:24.5px;background:#3d3d3d;border-radius:5px;"></div>
<svg style="left:1624px;top:694.7px;" width="288" height="25" viewBox="0 0 288 25"><path d="M11 8.5 L15 12.5 L11 16.5" fill="none" stroke="#d8d8d8" stroke-width="1"/><rect x="270.9" y="10.1" width="1.3" height="1.2" fill="#a8a8a8"/><rect x="270.9" y="11.4" width="1.3" height="1.2" fill="#000"/><rect x="270.9" y="13.1" width="1.3" height="1.2" fill="#a8a8a8"/><rect x="270.9" y="14.4" width="1.3" height="1.2" fill="#000"/><rect x="273.9" y="10.1" width="1.3" height="1.2" fill="#a8a8a8"/><rect x="273.9" y="11.4" width="1.3" height="1.2" fill="#000"/><rect x="273.9" y="13.1" width="1.3" height="1.2" fill="#a8a8a8"/><rect x="273.9" y="14.4" width="1.3" height="1.2" fill="#000"/><rect x="276.9" y="10.1" width="1.3" height="1.2" fill="#a8a8a8"/><rect x="276.9" y="11.4" width="1.3" height="1.2" fill="#000"/><rect x="276.9" y="13.1" width="1.3" height="1.2" fill="#a8a8a8"/><rect x="276.9" y="14.4" width="1.3" height="1.2" fill="#000"/><rect x="279.9" y="10.1" width="1.3" height="1.2" fill="#a8a8a8"/><rect x="279.9" y="11.4" width="1.3" height="1.2" fill="#000"/><rect x="279.9" y="13.1" width="1.3" height="1.2" fill="#a8a8a8"/><rect x="279.9" y="14.4" width="1.3" height="1.2" fill="#000"/></svg>
<div class="t" style="left:1646.30px;top:700.68px;font-size:11.6px;color:#e6e6e6;">Relations</div>
<div class="a" style="left:1624px;top:721.6px;width:287.7px;height:24.5px;background:#3d3d3d;border-radius:5px;"></div>
<svg style="left:1624px;top:721.6px;" width="288" height="25" viewBox="0 0 288 25"><path d="M11 8.5 L15 12.5 L11 16.5" fill="none" stroke="#d8d8d8" stroke-width="1"/><rect x="270.9" y="10.1" width="1.3" height="1.2" fill="#a8a8a8"/><rect x="270.9" y="11.4" width="1.3" height="1.2" fill="#000"/><rect x="270.9" y="13.1" width="1.3" height="1.2" fill="#a8a8a8"/><rect x="270.9" y="14.4" width="1.3" height="1.2" fill="#000"/><rect x="273.9" y="10.1" width="1.3" height="1.2" fill="#a8a8a8"/><rect x="273.9" y="11.4" width="1.3" height="1.2" fill="#000"/><rect x="273.9" y="13.1" width="1.3" height="1.2" fill="#a8a8a8"/><rect x="273.9" y="14.4" width="1.3" height="1.2" fill="#000"/><rect x="276.9" y="10.1" width="1.3" height="1.2" fill="#a8a8a8"/><rect x="276.9" y="11.4" width="1.3" height="1.2" fill="#000"/><rect x="276.9" y="13.1" width="1.3" height="1.2" fill="#a8a8a8"/><rect x="276.9" y="14.4" width="1.3" height="1.2" fill="#000"/><rect x="279.9" y="10.1" width="1.3" height="1.2" fill="#a8a8a8"/><rect x="279.9" y="11.4" width="1.3" height="1.2" fill="#000"/><rect x="279.9" y="13.1" width="1.3" height="1.2" fill="#a8a8a8"/><rect x="279.9" y="14.4" width="1.3" height="1.2" fill="#000"/></svg>
<div class="t" style="left:1646.30px;top:727.58px;font-size:11.6px;color:#e6e6e6;">Collections</div>
<div class="a" style="left:1624px;top:748.5px;width:287.7px;height:24.5px;background:#3d3d3d;border-radius:5px;"></div>
<svg style="left:1624px;top:748.5px;" width="288" height="25" viewBox="0 0 288 25"><path d="M11 8.5 L15 12.5 L11 16.5" fill="none" stroke="#d8d8d8" stroke-width="1"/><rect x="270.9" y="10.1" width="1.3" height="1.2" fill="#a8a8a8"/><rect x="270.9" y="11.4" width="1.3" height="1.2" fill="#000"/><rect x="270.9" y="13.1" width="1.3" height="1.2" fill="#a8a8a8"/><rect x="270.9" y="14.4" width="1.3" height="1.2" fill="#000"/><rect x="273.9" y="10.1" width="1.3" height="1.2" fill="#a8a8a8"/><rect x="273.9" y="11.4" width="1.3" height="1.2" fill="#000"/><rect x="273.9" y="13.1" width="1.3" height="1.2" fill="#a8a8a8"/><rect x="273.9" y="14.4" width="1.3" height="1.2" fill="#000"/><rect x="276.9" y="10.1" width="1.3" height="1.2" fill="#a8a8a8"/><rect x="276.9" y="11.4" width="1.3" height="1.2" fill="#000"/><rect x="276.9" y="13.1" width="1.3" height="1.2" fill="#a8a8a8"/><rect x="276.9" y="14.4" width="1.3" height="1.2" fill="#000"/><rect x="279.9" y="10.1" width="1.3" height="1.2" fill="#a8a8a8"/><rect x="279.9" y="11.4" width="1.3" height="1.2" fill="#000"/><rect x="279.9" y="13.1" width="1.3" height="1.2" fill="#a8a8a8"/><rect x="279.9" y="14.4" width="1.3" height="1.2" fill="#000"/></svg>
<div class="t" style="left:1646.30px;top:754.48px;font-size:11.6px;color:#e6e6e6;">Instancing</div>
<div class="a" style="left:1624px;top:775.6px;width:287.7px;height:24.5px;background:#3d3d3d;border-radius:5px;"></div>
<svg style="left:1624px;top:775.6px;" width="288" height="25" viewBox="0 0 288 25"><path d="M11 8.5 L15 12.5 L11 16.5" fill="none" stroke="#d8d8d8" stroke-width="1"/><rect x="270.9" y="10.1" width="1.3" height="1.2" fill="#a8a8a8"/><rect x="270.9" y="11.4" width="1.3" height="1.2" fill="#000"/><rect x="270.9" y="13.1" width="1.3" height="1.2" fill="#a8a8a8"/><rect x="270.9" y="14.4" width="1.3" height="1.2" fill="#000"/><rect x="273.9" y="10.1" width="1.3" height="1.2" fill="#a8a8a8"/><rect x="273.9" y="11.4" width="1.3" height="1.2" fill="#000"/><rect x="273.9" y="13.1" width="1.3" height="1.2" fill="#a8a8a8"/><rect x="273.9" y="14.4" width="1.3" height="1.2" fill="#000"/><rect x="276.9" y="10.1" width="1.3" height="1.2" fill="#a8a8a8"/><rect x="276.9" y="11.4" width="1.3" height="1.2" fill="#000"/><rect x="276.9" y="13.1" width="1.3" height="1.2" fill="#a8a8a8"/><rect x="276.9" y="14.4" width="1.3" height="1.2" fill="#000"/><rect x="279.9" y="10.1" width="1.3" height="1.2" fill="#a8a8a8"/><rect x="279.9" y="11.4" width="1.3" height="1.2" fill="#000"/><rect x="279.9" y="13.1" width="1.3" height="1.2" fill="#a8a8a8"/><rect x="279.9" y="14.4" width="1.3" height="1.2" fill="#000"/></svg>
<div class="t" style="left:1646.30px;top:781.58px;font-size:11.6px;color:#e6e6e6;">Motion Paths</div>
<div class="a" style="left:1624px;top:802.7px;width:287.7px;height:24.5px;background:#3d3d3d;border-radius:5px;"></div>
<svg style="left:1624px;top:802.7px;" width="288" height="25" viewBox="0 0 288 25"><path d="M11 8.5 L15 12.5 L11 16.5" fill="none" stroke="#d8d8d8" stroke-width="1"/><rect x="270.9" y="10.1" width="1.3" height="1.2" fill="#a8a8a8"/><rect x="270.9" y="11.4" width="1.3" height="1.2" fill="#000"/><rect x="270.9" y="13.1" width="1.3" height="1.2" fill="#a8a8a8"/><rect x="270.9" y="14.4" width="1.3" height="1.2" fill="#000"/><rect x="273.9" y="10.1" width="1.3" height="1.2" fill="#a8a8a8"/><rect x="273.9" y="11.4" width="1.3" height="1.2" fill="#000"/><rect x="273.9" y="13.1" width="1.3" height="1.2" fill="#a8a8a8"/><rect x="273.9" y="14.4" width="1.3" height="1.2" fill="#000"/><rect x="276.9" y="10.1" width="1.3" height="1.2" fill="#a8a8a8"/><rect x="276.9" y="11.4" width="1.3" height="1.2" fill="#000"/><rect x="276.9" y="13.1" width="1.3" height="1.2" fill="#a8a8a8"/><rect x="276.9" y="14.4" width="1.3" height="1.2" fill="#000"/><rect x="279.9" y="10.1" width="1.3" height="1.2" fill="#a8a8a8"/><rect x="279.9" y="11.4" width="1.3" height="1.2" fill="#000"/><rect x="279.9" y="13.1" width="1.3" height="1.2" fill="#a8a8a8"/><rect x="279.9" y="14.4" width="1.3" height="1.2" fill="#000"/></svg>
<div class="t" style="left:1646.30px;top:808.68px;font-size:11.6px;color:#e6e6e6;">Visibility</div>
<div class="a" style="left:1624px;top:829.7px;width:287.7px;height:24.5px;background:#3d3d3d;border-radius:5px;"></div>
<svg style="left:1624px;top:829.7px;" width="288" height="25" viewBox="0 0 288 25"><path d="M11 8.5 L15 12.5 L11 16.5" fill="none" stroke="#d8d8d8" stroke-width="1"/><rect x="270.9" y="10.1" width="1.3" height="1.2" fill="#a8a8a8"/><rect x="270.9" y="11.4" width="1.3" height="1.2" fill="#000"/><rect x="270.9" y="13.1" width="1.3" height="1.2" fill="#a8a8a8"/><rect x="270.9" y="14.4" width="1.3" height="1.2" fill="#000"/><rect x="273.9" y="10.1" width="1.3" height="1.2" fill="#a8a8a8"/><rect x="273.9" y="11.4" width="1.3" height="1.2" fill="#000"/><rect x="273.9" y="13.1" width="1.3" height="1.2" fill="#a8a8a8"/><rect x="273.9" y="14.4" width="1.3" height="1.2" fill="#000"/><rect x="276.9" y="10.1" width="1.3" height="1.2" fill="#a8a8a8"/><rect x="276.9" y="11.4" width="1.3" height="1.2" fill="#000"/><rect x="276.9" y="13.1" width="1.3" height="1.2" fill="#a8a8a8"/><rect x="276.9" y="14.4" width="1.3" height="1.2" fill="#000"/><rect x="279.9" y="10.1" width="1.3" height="1.2" fill="#a8a8a8"/><rect x="279.9" y="11.4" width="1.3" height="1.2" fill="#000"/><rect x="279.9" y="13.1" width="1.3" height="1.2" fill="#a8a8a8"/><rect x="279.9" y="14.4" width="1.3" height="1.2" fill="#000"/></svg>
<div class="t" style="left:1646.30px;top:835.68px;font-size:11.6px;color:#e6e6e6;">Viewport Display</div>
<div class="a" style="left:1624px;top:856.7px;width:287.7px;height:24.5px;background:#3d3d3d;border-radius:5px;"></div>
<svg style="left:1624px;top:856.7px;" width="288" height="25" viewBox="0 0 288 25"><path d="M11 8.5 L15 12.5 L11 16.5" fill="none" stroke="#d8d8d8" stroke-width="1"/><rect x="270.9" y="10.1" width="1.3" height="1.2" fill="#a8a8a8"/><rect x="270.9" y="11.4" width="1.3" height="1.2" fill="#000"/><rect x="270.9" y="13.1" width="1.3" height="1.2" fill="#a8a8a8"/><rect x="270.9" y="14.4" width="1.3" height="1.2" fill="#000"/><rect x="273.9" y="10.1" width="1.3" height="1.2" fill="#a8a8a8"/><rect x="273.9" y="11.4" width="1.3" height="1.2" fill="#000"/><rect x="273.9" y="13.1" width="1.3" height="1.2" fill="#a8a8a8"/><rect x="273.9" y="14.4" width="1.3" height="1.2" fill="#000"/><rect x="276.9" y="10.1" width="1.3" height="1.2" fill="#a8a8a8"/><rect x="276.9" y="11.4" width="1.3" height="1.2" fill="#000"/><rect x="276.9" y="13.1" width="1.3" height="1.2" fill="#a8a8a8"/><rect x="276.9" y="14.4" width="1.3" height="1.2" fill="#000"/><rect x="279.9" y="10.1" width="1.3" height="1.2" fill="#a8a8a8"/><rect x="279.9" y="11.4" width="1.3" height="1.2" fill="#000"/><rect x="279.9" y="13.1" width="1.3" height="1.2" fill="#a8a8a8"/><rect x="279.9" y="14.4" width="1.3" height="1.2" fill="#000"/></svg>
<div class="t" style="left:1646.30px;top:862.68px;font-size:11.6px;color:#e6e6e6;">Line Art</div>
<div class="a" style="left:1624px;top:883.7px;width:287.7px;height:24.5px;background:#3d3d3d;border-radius:5px;"></div>
<svg style="left:1624px;top:883.7px;" width="288" height="25" viewBox="0 0 288 25"><path d="M11 8.5 L15 12.5 L11 16.5" fill="none" stroke="#d8d8d8" stroke-width="1"/><rect x="270.9" y="10.1" width="1.3" height="1.2" fill="#a8a8a8"/><rect x="270.9" y="11.4" width="1.3" height="1.2" fill="#000"/><rect x="270.9" y="13.1" width="1.3" height="1.2" fill="#a8a8a8"/><rect x="270.9" y="14.4" width="1.3" height="1.2" fill="#000"/><rect x="273.9" y="10.1" width="1.3" height="1.2" fill="#a8a8a8"/><rect x="273.9" y="11.4" width="1.3" height="1.2" fill="#000"/><rect x="273.9" y="13.1" width="1.3" height="1.2" fill="#a8a8a8"/><rect x="273.9" y="14.4" width="1.3" height="1.2" fill="#000"/><rect x="276.9" y="10.1" width="1.3" height="1.2" fill="#a8a8a8"/><rect x="276.9" y="11.4" width="1.3" height="1.2" fill="#000"/><rect x="276.9" y="13.1" width="1.3" height="1.2" fill="#a8a8a8"/><rect x="276.9" y="14.4" width="1.3" height="1.2" fill="#000"/><rect x="279.9" y="10.1" width="1.3" height="1.2" fill="#a8a8a8"/><rect x="279.9" y="11.4" width="1.3" height="1.2" fill="#000"/><rect x="279.9" y="13.1" width="1.3" height="1.2" fill="#a8a8a8"/><rect x="279.9" y="14.4" width="1.3" height="1.2" fill="#000"/></svg>
<div class="t" style="left:1646.30px;top:889.68px;font-size:11.6px;color:#e6e6e6;">Custom Properties</div>
</body></html>
